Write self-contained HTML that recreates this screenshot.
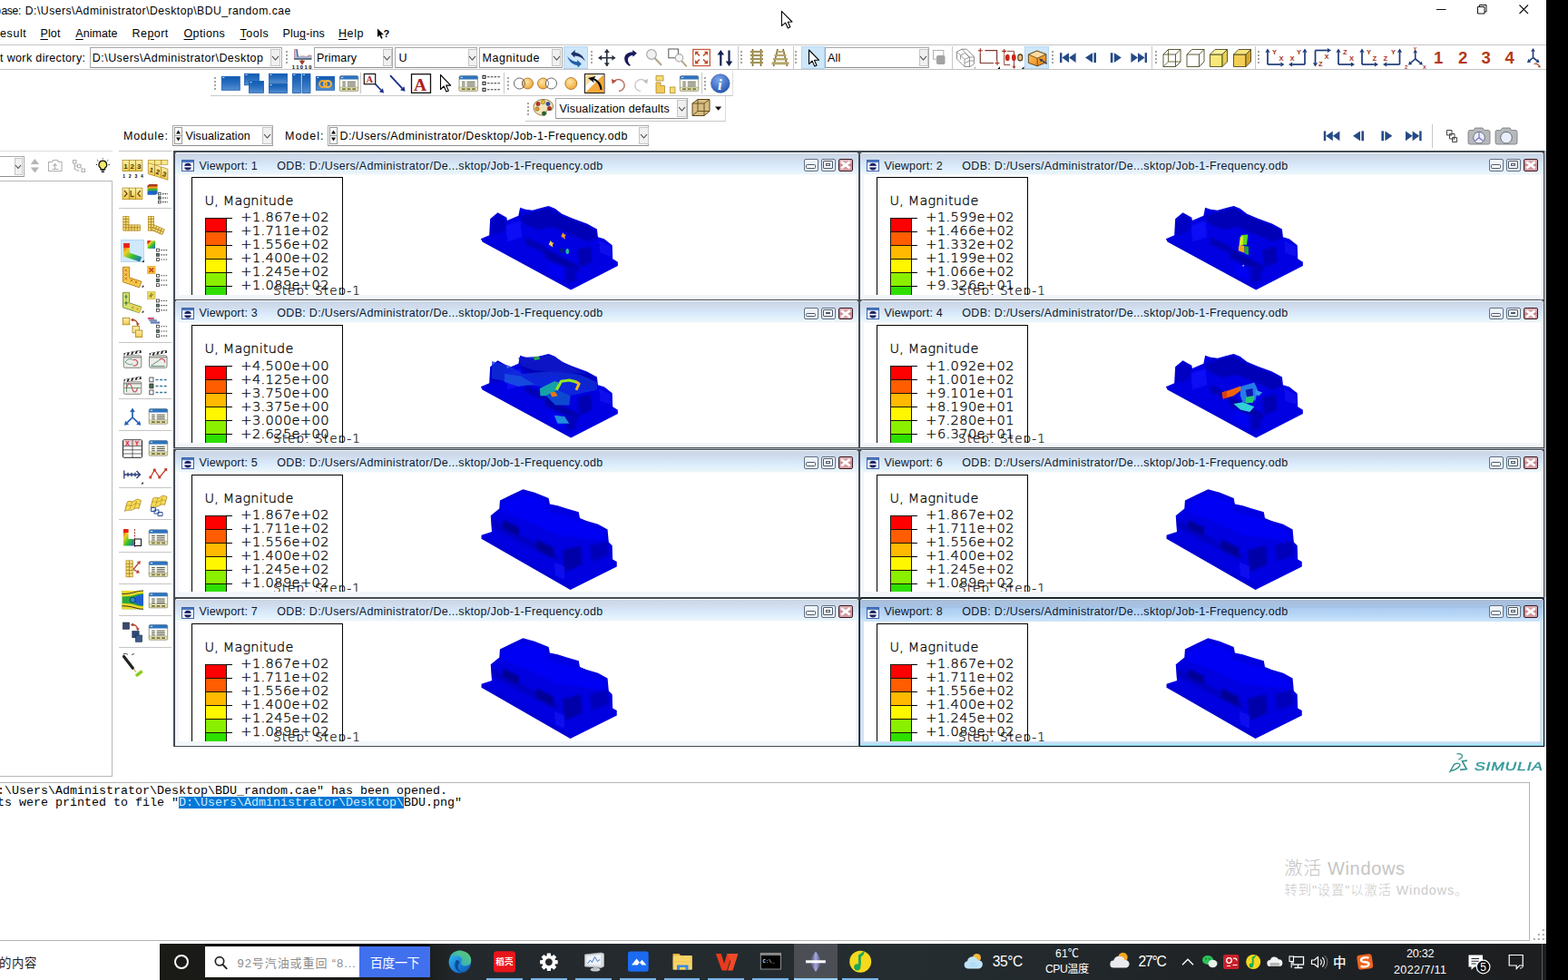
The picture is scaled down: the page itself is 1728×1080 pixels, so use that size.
<!DOCTYPE html>
<html lang="en"><head><meta charset="utf-8"><title>Abaqus/CAE - Model Database: D:\Users\Administrator\Desktop\BDU_random.cae</title>
<style>
html,body{margin:0;padding:0}
body{width:1728px;height:1080px;position:relative;overflow:hidden;background:#fff;font-family:"Liberation Sans","Noto Sans CJK SC",sans-serif;font-size:12.5px;color:#000}
.t{position:absolute;white-space:pre;line-height:20px}
.pb{display:inline-block;width:0;height:0}
.b{position:absolute;box-sizing:border-box;overflow:visible}
.g{position:absolute;left:0;top:0}
.cb{position:absolute;box-sizing:border-box;background:#fff;border:1px solid #a9a9a9;border-bottom-color:#8e8e8e}
.ar{position:absolute;box-sizing:border-box;background:#f0f0f0;border:1px solid #c6c6c6}
.hl{position:absolute;box-sizing:border-box;background:#cde6fa;border:1px solid #b3d6f4}
.sep{position:absolute;width:1px;background:#c8c8c8}
.hline{position:absolute;height:1px;background:#c4c4c4}
.dots{position:absolute;width:2px;background:repeating-linear-gradient(#aaa5a5 0 2px,transparent 2px 4px)}
.vp{position:absolute;box-sizing:border-box;background:#fff;overflow:hidden}
.vt{position:absolute;background:linear-gradient(#cbd6e5,#d0dcec 25%,#d7e8fa 52%,#e2f1fc 76%,#ecf5fa 95%,#fff)}
.vc{position:absolute;overflow:hidden;background:#fff}
.wb{position:absolute;box-sizing:border-box;border:1.200px solid #627082;border-radius:2px;background:linear-gradient(#f1f6fb,#e6eef7)}
</style></head>
<body>
<div class="g" id="titlebar"><span class="t" style="left:-5.70px;top:1.70px;font-size:12.2px;font-family:'Liberation Sans','Noto Sans CJK SC',sans-serif;">b</span><span class="t" style="left:1.40px;top:1.70px;font-size:12.2px;font-family:'Liberation Sans','Noto Sans CJK SC',sans-serif;letter-spacing:-0.350px;">ase:</span><span class="t" style="left:27.80px;top:1.70px;font-size:12.2px;font-family:'Liberation Sans','Noto Sans CJK SC',sans-serif;letter-spacing:0.490px;">D:\Users\Administrator\Desktop\BDU_random.cae</span><svg class="b" style="left:1578px;top:0px;" width="112" height="22" viewBox="1578 0 112 22"><path d="M1583 10.5h10.5" stroke="#111" stroke-width="1" fill="none"/><path d="M1628.5 7.5h7.5v7.5h-7.5zM1630.5 7.5v-2h7.5v7.5h-2" stroke="#111" stroke-width="1" fill="none"/><path d="M1674.5 5.5l9.5 9.5M1684 5.5l-9.5 9.5" stroke="#111" stroke-width="1.1" fill="none"/></svg></div>
<div class="g" id="menubar"><span class="t" style="left:-9.50px;top:26.80px;font-size:12.5px;font-family:'Liberation Sans','Noto Sans CJK SC',sans-serif;letter-spacing:0.548px;text-underline-offset:1.5px;"><u>R</u>esult</span><span class="t" style="left:44.40px;top:26.80px;font-size:12.5px;font-family:'Liberation Sans','Noto Sans CJK SC',sans-serif;letter-spacing:0.178px;text-underline-offset:1.5px;"><u>P</u>lot</span><span class="t" style="left:83.30px;top:26.80px;font-size:12.5px;font-family:'Liberation Sans','Noto Sans CJK SC',sans-serif;letter-spacing:0.066px;text-underline-offset:1.5px;"><u>A</u>nimate</span><span class="t" style="left:145.50px;top:26.80px;font-size:12.5px;font-family:'Liberation Sans','Noto Sans CJK SC',sans-serif;letter-spacing:0.441px;text-underline-offset:1.5px;">Re<u>p</u>ort</span><span class="t" style="left:202.50px;top:26.80px;font-size:12.5px;font-family:'Liberation Sans','Noto Sans CJK SC',sans-serif;letter-spacing:0.362px;text-underline-offset:1.5px;"><u>O</u>ptions</span><span class="t" style="left:264.50px;top:26.80px;font-size:12.5px;font-family:'Liberation Sans','Noto Sans CJK SC',sans-serif;letter-spacing:0.517px;text-underline-offset:1.5px;"><u>T</u>ools</span><span class="t" style="left:311.50px;top:26.80px;font-size:12.5px;font-family:'Liberation Sans','Noto Sans CJK SC',sans-serif;letter-spacing:0.156px;text-underline-offset:1.5px;">Plu<u>g</u>-ins</span><span class="t" style="left:373.00px;top:26.80px;font-size:12.5px;font-family:'Liberation Sans','Noto Sans CJK SC',sans-serif;letter-spacing:0.581px;text-underline-offset:1.5px;"><u>H</u>elp</span><svg class="b" style="left:415px;top:30px;" width="14" height="14" viewBox="415 30 14 14"><path d="M416 31.5v9.5l2.3-2.2 1.8 3.9 1.5-.7-1.8-3.8h3.2z" fill="#000"/></svg><span class="t" style="left:422.50px;top:27.00px;font-size:11px;font-family:'Liberation Sans','Noto Sans CJK SC',sans-serif;font-weight:700;">?</span></div>
<div class="g" id="toolbars"><div class="hline" style="left:0px;top:49px;width:1704px;height:1px;"></div><div class="hline" style="left:0px;top:76px;width:1704px;height:1px;"></div><div class="b" style="left:232px;top:77.5px;width:576px;height:28.5px;border-bottom:1px solid #c9c9c9;border-right:1px solid #dcdcdc;"></div><div class="b" style="left:579px;top:106px;width:220.5px;height:27.5px;border-bottom:1px solid #c9c9c9;border-right:1px solid #dcdcdc;"></div><span class="t" style="left:0.00px;top:53.70px;font-size:12.5px;font-family:'Liberation Sans','Noto Sans CJK SC',sans-serif;letter-spacing:0.360px;">t work directory:</span><div class="cb" style="left:98.5px;top:51.5px;width:212.25px;height:23.5px;"></div><div class="ar" style="left:297.5px;top:53.5px;width:11.25px;height:19.5px;"></div><svg class="b" style="left:298.62px;top:60.75px;" width="9" height="6" viewBox="298.62 60.75 9 6"><path d="M299.62 61.75 L303.12 65.75 L306.62 61.75" fill="none" stroke="#444" stroke-width="1.1"/></svg><span class="t" style="left:101.80px;top:53.70px;font-size:12.5px;font-family:'Liberation Sans','Noto Sans CJK SC',sans-serif;letter-spacing:0.452px;">D:\Users\Administrator\Desktop</span><div class="dots" style="left:314.5px;top:56px;width:2px;height:14px;"></div><div class="cb" style="left:346px;top:51.5px;width:86.5px;height:23.5px;"></div><div class="ar" style="left:421.5px;top:53.5px;width:10px;height:19.5px;"></div><svg class="b" style="left:422px;top:60.75px;" width="9" height="6" viewBox="422 60.75 9 6"><path d="M423 61.75 L426.5 65.75 L430 61.75" fill="none" stroke="#444" stroke-width="1.1"/></svg><span class="t" style="left:349.00px;top:53.70px;font-size:12.5px;font-family:'Liberation Sans','Noto Sans CJK SC',sans-serif;letter-spacing:0.158px;">Primary</span><div class="cb" style="left:434.5px;top:51.5px;width:91.5px;height:23.5px;"></div><div class="ar" style="left:515.75px;top:53.5px;width:10px;height:19.5px;"></div><svg class="b" style="left:516.25px;top:60.75px;" width="9" height="6" viewBox="516.25 60.75 9 6"><path d="M517.25 61.75 L520.75 65.75 L524.25 61.75" fill="none" stroke="#444" stroke-width="1.1"/></svg><span class="t" style="left:439.50px;top:53.70px;font-size:12.5px;font-family:'Liberation Sans','Noto Sans CJK SC',sans-serif;">U</span><div class="cb" style="left:528px;top:51.5px;width:91.5px;height:23.5px;"></div><div class="ar" style="left:608px;top:53.5px;width:10px;height:19.5px;"></div><svg class="b" style="left:608.5px;top:60.75px;" width="9" height="6" viewBox="608.5 60.75 9 6"><path d="M609.5 61.75 L613 65.75 L616.5 61.75" fill="none" stroke="#444" stroke-width="1.1"/></svg><span class="t" style="left:531.50px;top:53.70px;font-size:12.5px;font-family:'Liberation Sans','Noto Sans CJK SC',sans-serif;letter-spacing:0.572px;">Magnitude</span><div class="hl" style="left:620.75px;top:50.5px;width:27px;height:25.5px;"></div><div class="dots" style="left:651px;top:56px;width:2px;height:14px;"></div><div class="dots" style="left:815.5px;top:56px;width:2px;height:14px;"></div><div class="dots" style="left:876px;top:56px;width:2px;height:14px;"></div><div class="dots" style="left:1159px;top:56px;width:2px;height:14px;"></div><div class="dots" style="left:1273px;top:56px;width:2px;height:14px;"></div><div class="dots" style="left:1386px;top:56px;width:2px;height:14px;"></div><div class="sep" style="left:812.5px;top:51px;width:1px;height:25px;"></div><div class="sep" style="left:874px;top:51px;width:1px;height:25px;"></div><div class="sep" style="left:1049px;top:51px;width:1px;height:25px;"></div><div class="sep" style="left:1268.5px;top:51px;width:1px;height:25px;"></div><div class="sep" style="left:1383px;top:51px;width:1px;height:25px;"></div><div class="hl" style="left:882.5px;top:50.5px;width:26px;height:25.5px;"></div><div class="cb" style="left:908.5px;top:51.5px;width:115.5px;height:23.5px;"></div><div class="ar" style="left:1012.5px;top:53.5px;width:10px;height:19.5px;"></div><svg class="b" style="left:1013px;top:60.75px;" width="9" height="6" viewBox="1013 60.75 9 6"><path d="M1014 61.75 L1017.5 65.75 L1021 61.75" fill="none" stroke="#444" stroke-width="1.1"/></svg><span class="t" style="left:912.00px;top:53.70px;font-size:12.5px;font-family:'Liberation Sans','Noto Sans CJK SC',sans-serif;letter-spacing:0.193px;">All</span><div class="hl" style="left:1129.2px;top:50.5px;width:26.5px;height:25.5px;"></div><span class="t" style="left:1580.00px;top:54.20px;font-size:18.5px;font-family:'Liberation Sans','Noto Sans CJK SC',sans-serif;color:#b3391c;font-weight:700;">1</span><span class="t" style="left:1607.00px;top:54.20px;font-size:18.5px;font-family:'Liberation Sans','Noto Sans CJK SC',sans-serif;color:#b3391c;font-weight:700;">2</span><span class="t" style="left:1632.40px;top:54.20px;font-size:18.5px;font-family:'Liberation Sans','Noto Sans CJK SC',sans-serif;color:#b3391c;font-weight:700;">3</span><span class="t" style="left:1658.40px;top:54.20px;font-size:18.5px;font-family:'Liberation Sans','Noto Sans CJK SC',sans-serif;color:#b3391c;font-weight:700;">4</span><div class="dots" style="left:236px;top:85px;width:2px;height:14px;"></div><div class="dots" style="left:559px;top:85px;width:2px;height:14px;"></div><div class="dots" style="left:776px;top:85px;width:2px;height:14px;"></div><div class="sep" style="left:397.4px;top:80px;width:1px;height:23px;"></div><div class="sep" style="left:555px;top:80px;width:1px;height:23px;"></div><div class="sep" style="left:772.5px;top:80px;width:1px;height:23px;"></div><div class="dots" style="left:581px;top:113px;width:2px;height:14px;"></div><div class="cb" style="left:612px;top:107.5px;width:146px;height:23.5px;"></div><div class="ar" style="left:745.75px;top:109.5px;width:10.75px;height:19.5px;"></div><svg class="b" style="left:746.62px;top:116.75px;" width="9" height="6" viewBox="746.62 116.75 9 6"><path d="M747.62 117.75 L751.12 121.75 L754.62 117.75" fill="none" stroke="#444" stroke-width="1.1"/></svg><span class="t" style="left:616.50px;top:109.80px;font-size:12.5px;font-family:'Liberation Sans','Noto Sans CJK SC',sans-serif;letter-spacing:0.193px;">Visualization defaults</span><span class="t" style="left:136.00px;top:139.50px;font-size:12.5px;font-family:'Liberation Sans','Noto Sans CJK SC',sans-serif;letter-spacing:0.734px;">Module:</span><div class="cb" style="left:190px;top:138px;width:111px;height:23px;"></div><div class="ar" style="left:289px;top:140px;width:11px;height:19px;"></div><svg class="b" style="left:290px;top:147px;" width="9" height="6" viewBox="290 147 9 6"><path d="M291 148 L294.5 152 L298 148" fill="none" stroke="#444" stroke-width="1.1"/></svg><span class="t" style="left:204.50px;top:139.50px;font-size:12.5px;font-family:'Liberation Sans','Noto Sans CJK SC',sans-serif;letter-spacing:0.100px;">Visualization</span><svg class="b" style="left:191.8px;top:140px;" width="9" height="19" viewBox="191.8 140 9 19"><rect x="192.3" y="140.5" width="8" height="18" fill="#fdfdfd" stroke="#9a9a9a" stroke-width="1"/><path d="M193.8 147.5 l2.5 -4 l2.5 4z M193.8 151.5 l2.5 4 l2.5 -4z" fill="#111"/><path d="M191.8 149.5h9" stroke="#9a9a9a"/></svg><span class="t" style="left:314.00px;top:139.50px;font-size:12.5px;font-family:'Liberation Sans','Noto Sans CJK SC',sans-serif;letter-spacing:0.991px;">Model:</span><div class="cb" style="left:361px;top:138px;width:354px;height:23px;"></div><div class="ar" style="left:703.5px;top:140px;width:11px;height:19px;"></div><svg class="b" style="left:704.5px;top:147px;" width="9" height="6" viewBox="704.5 147 9 6"><path d="M705.5 148 L709 152 L712.5 148" fill="none" stroke="#444" stroke-width="1.1"/></svg><span class="t" style="left:374.50px;top:139.70px;font-size:12.5px;font-family:'Liberation Sans','Noto Sans CJK SC',sans-serif;letter-spacing:0.419px;">D:/Users/Administrator/Desktop/Job-1-Frequency.odb</span><svg class="b" style="left:362.8px;top:140px;" width="9" height="19" viewBox="362.8 140 9 19"><rect x="363.3" y="140.5" width="8" height="18" fill="#fdfdfd" stroke="#9a9a9a" stroke-width="1"/><path d="M364.8 147.5 l2.5 -4 l2.5 4z M364.8 151.5 l2.5 4 l2.5 -4z" fill="#111"/><path d="M362.8 149.5h9" stroke="#9a9a9a"/></svg><div class="sep" style="left:1578px;top:137px;width:1px;height:26px;"></div></div>
<div class="g" id="toolbar-icons"><svg class="b" style="left:318px;top:49px;" width="1386" height="28.5" viewBox="318 49 1386 28.5"><path d="M324.500 54.500h3v8.500c4-1.500 8-1.500 12 0v-2h3.500v4h-18.500z" fill="#9cc4e8" stroke="#c8788a" stroke-width=".8"/><path d="M324 65h19.500" stroke="#2f4f5f" stroke-width="1.300"/><path d="M327 54.500l1.500 8" stroke="#2b4f8f" stroke-width="1"/><path d="M333 65.500v3.500m-2-1.500l2 3 2-3z" stroke="#9a3c2c" stroke-width="1.300" fill="#9a3c2c"/><text x="321.800" y="76" font-family="Liberation Sans,sans-serif" font-weight="700" font-size="5.800" letter-spacing="1.450" fill="#000">11010</text><path d="M629.100 59.200L633.800 55l-.2 2.800c5.400.7 9.400 4.200 11.100 9.500-3.200-3.800-6.700-5.500-11.300-5.800l-.1 2.100z" fill="#1c3068"/><path d="M640.800 70.400l-4.100 4.200-.1-2.600c-5.600-.5-9.600-4.500-11.400-10 3.300 4 6.800 6 11.100 6.300l-.2-2.300z" fill="#1f5fa8"/><path d="M668.8 54.7v18M659.8 63.7h18" stroke="#2a3040" stroke-width="1.600"/><path d="M668.8 54.1l-3 4h6z" fill="#2a3040"/><path d="M668.8 73.3l-3 -4h6z" fill="#2a3040"/><path d="M659.2 63.7l4 -3v6z" fill="#2a3040"/><path d="M678.4 63.7l-4 -3v6z" fill="#2a3040"/><path d="M701.800 58.400L697.100 55l.2 2.300c-6.300.2-9.300 3.700-9.100 7.700.2 3.500 2.300 6 5.300 7.700l1.500-.7c-2.500-2.500-3.400-5-3-7 .5-2.500 2.500-3.800 5.400-4l.2 1.800z" fill="#1a1a5e"/><path d="M721.500 64l7 7.300" stroke="#b5a78a" stroke-width="2.200" stroke-linecap="round"/><circle cx="718" cy="60" r="5.300" fill="#f1f1f1" stroke="#a9a9a9" stroke-width="1.200"/><rect x="736.800" y="54" width="10.600" height="9.800" fill="none" stroke="#555" stroke-width="1"/><path d="M751 66.800l5.300 6" stroke="#b5a78a" stroke-width="2" stroke-linecap="round"/><circle cx="748.500" cy="63.800" r="4.200" fill="#f4f4f4" stroke="#a9a9a9" stroke-width="1.100"/><rect x="763.800" y="54.500" width="18.500" height="18" fill="#fff" stroke="#c7573a" stroke-width="1.300"/><path d="M771 61.5l-4 -4" stroke="#c0451f" stroke-width="1.600"/><path d="M766 56.7l4.2 0l-4.2 4.2z" fill="#c0451f"/><path d="M775 61.5l4 -4" stroke="#c0451f" stroke-width="1.600"/><path d="M780 56.7l-4.2 0l4.2 4.2z" fill="#c0451f"/><path d="M771 65.5l-4 4" stroke="#c0451f" stroke-width="1.600"/><path d="M766 70.3l4.2 0l-4.2 -4.2z" fill="#c0451f"/><path d="M775 65.5l4 4" stroke="#c0451f" stroke-width="1.600"/><path d="M780 70.3l-4.2 0l4.2 -4.2z" fill="#c0451f"/><path d="M794.300 72.500v-13M803.500 55.500v13" stroke="#14204e" stroke-width="2.200"/><path d="M794.300 55l-3.800 5.500h7.600zM803.500 73l-3.800-5.500h7.600z" fill="#14204e"/><path d="M829.500 54v19M838.500 54v19" stroke="#7d6f35" stroke-width="1.600"/><path d="M826.800 57h14.200" stroke="#a5955a" stroke-width="2.200"/><path d="M826.800 61h14.200" stroke="#a5955a" stroke-width="2.200"/><path d="M826.800 65h14.200" stroke="#a5955a" stroke-width="2.200"/><path d="M826.800 69h14.200" stroke="#a5955a" stroke-width="2.200"/><path d="M857 54l-4.500 19M863 54l4.500 19" stroke="#7d6f35" stroke-width="1.600"/><path d="M855 57h10" stroke="#b5a56a" stroke-width="1.8"/><path d="M853.5 61h13" stroke="#b5a56a" stroke-width="2.15"/><path d="M852 65.2h16" stroke="#b5a56a" stroke-width="2.5"/><path d="M850.5 69.8h19" stroke="#b5a56a" stroke-width="2.85"/><path d="M891.500 55v15.500l3.600-3.400 2.600 5.800 2.300-1-2.600-5.700h5z" fill="#fff" stroke="#000" stroke-width="1.100" stroke-linejoin="round"/><rect x="1028.500" y="55.500" width="11.300" height="9.700" fill="#fff" stroke="#b0b0b0" stroke-width="1"/><rect x="1032" y="61" width="9.500" height="10" rx="1.800" fill="#a3a3a3"/><path d="M1054.500 57l5.500-2.800h5l8.500 8.300v8l-4.500 3h-6l-8.500-8.500z" fill="#fff" stroke="#8f8f8f" stroke-width="1"/><path d="M1054.500 57l8.500 8.500v8M1063 65.500l5.500-2.500h5M1060 54.200l8.500 8.800v10.500M1058.500 61l5-2.500 4.500 4.500M1063 69.500l5.500-2.500h5M1058.500 61v4.500" fill="none" stroke="#8f8f8f" stroke-width=".9"/><path d="M1073 75.500l2.200-2.200v2.200z" fill="#9a9a9a"/><path d="M1085.500 55.700h13.100v11.300M1080.300 58.500v11h14.700" fill="none" stroke="#7a3a35" stroke-width="1.200"/><path d="M1077.800 55.700h5M1080.300 53.200v5M1096.500 69.500h5M1099 67v5" stroke="#a02a20" stroke-width="1.100"/><path d="M1099.300 76l2.700-2.700v2.700z" fill="#111"/><path d="M1104.200 56.400h5M1106.700 53.900v5" stroke="#a02a20" stroke-width="1.100"/><path d="M1110 56.400h7.500v15M1106.700 59.500v12h6.500" fill="none" stroke="#8a4a42" stroke-width="1"/><path d="M1117.500 71v3.500m-1.600-1.800l1.600 2.600 1.600-2.600" fill="none" stroke="#a02a20" stroke-width="1"/><ellipse cx="1110.300" cy="63.400" rx="2.400" ry="3.600" fill="#c8281a"/><ellipse cx="1117.300" cy="63.400" rx="2.400" ry="3.600" fill="#c8281a"/><ellipse cx="1124.300" cy="63.400" rx="2.500" ry="3.500" fill="#e8c080" stroke="#3a2a10" stroke-width="1.100"/><path d="M1125.800 76l2.700-2.700v2.700z" fill="#111"/><defs><linearGradient id="obx" x1="0" y1="0" x2="1" y2="1"><stop offset="0" stop-color="#f8c868"/><stop offset="1" stop-color="#f07c0c"/></linearGradient></defs><path d="M1133.400 60.200l9.300-4.100 10.200 3.700v9l-9.700 4-9.800-3.500z" fill="url(#obx)" stroke="#5a3a10" stroke-width=".9" stroke-linejoin="round"/><path d="M1133.400 60.200l9.300-4.100 10.200 3.700-9.700 4.400z" fill="#fbdca0" stroke="#5a3a10" stroke-width=".8" stroke-linejoin="round"/><path d="M1143.200 64.200v8.600" stroke="#5a3a10" stroke-width=".8"/><path d="M1146.500 65.600l7.300 4.800" stroke="#3c4450" stroke-width="1.700"/><path d="M1145 64.600l4.300.6-2.300 3.200z" fill="#3c4450"/><rect x="1168" y="58.2" width="2.400" height="10.8" fill="#264a86"/><path d="M1178 58.2L1170.4 63.6L1178 69z M1185.6 58.2L1178 63.6L1185.6 69z" fill="#264a86"/><path d="M1204 58.2L1196 63.6L1204 69z" fill="#264a86"/><rect x="1205.4" y="58.2" width="2.600" height="10.8" fill="#264a86"/><rect x="1223.8" y="58.2" width="2.600" height="10.8" fill="#264a86"/><path d="M1227.8 58.2L1235.8 63.6L1227.8 69z" fill="#264a86"/><path d="M1246.4 58.2L1254 63.6L1246.4 69z M1254 58.2L1261.6 63.6L1254 69z" fill="#264a86"/><rect x="1261.6" y="58.2" width="2.400" height="10.8" fill="#264a86"/><path d="M1282 60h13.5v13.5h-13.5z M1282 60l5.5 -5.5h13.5l-5.5 5.5 M1301 54.5v13.5l-5.5 5.5" fill="none" stroke="#4a4a20" stroke-width="0.9" stroke-linejoin="round"/><path d="M1287.5 54.5v13.5h13.5 M1282 73.5l5.5 -5.5" fill="none" stroke="#4a4a20" stroke-width="0.800"/><path d="M1308 60h13.5v13.5h-13.5z M1308 60l5.5 -5.5h13.5l-5.5 5.5 M1327 54.5v13.5l-5.5 5.5" fill="#fff" stroke="#4a4a20" stroke-width="0.9" stroke-linejoin="round"/><path d="M1333.5 60h13.5v13.5h-13.5z" fill="#f8e878" stroke="#4a4a20" stroke-width="0.9" stroke-linejoin="round"/><path d="M1333.5 60l5.5 -5.5h13.5l-5.5 5.5z" fill="#fbf0a0" stroke="#4a4a20" stroke-width="0.9" stroke-linejoin="round"/><path d="M1347 60l5.5 -5.5v13.5l-5.5 5.5z" fill="#e8cf55" stroke="#4a4a20" stroke-width="0.9" stroke-linejoin="round"/><path d="M1359.5 60h13.5v13.5h-13.5z" fill="#f3cf58" stroke="#4a4a20" stroke-width="0.9" stroke-linejoin="round"/><path d="M1359.5 60l5.5 -5.5h13.5l-5.5 5.5z" fill="#f9e27c" stroke="#4a4a20" stroke-width="0.9" stroke-linejoin="round"/><path d="M1373 60l5.5 -5.5v13.5l-5.5 5.5z" fill="#d9a62e" stroke="#4a4a20" stroke-width="0.9" stroke-linejoin="round"/><path d="M1397 71L1411.34 71" stroke="#1c3a78" stroke-width="1.7" fill="none"/><path d="M1415.5 71L1411.34 73.6L1411.34 68.4z" fill="#1c3a78"/><path d="M1397 71L1397 57.66" stroke="#1c3a78" stroke-width="1.7" fill="none"/><path d="M1397 53.5L1399.6 57.66L1394.4 57.66z" fill="#1c3a78"/><text x="1402" y="60" font-family="Liberation Sans,sans-serif" font-weight="700" font-size="7.5" fill="#a8321c">Y</text><text x="1409.5" y="67" font-family="Liberation Sans,sans-serif" font-weight="700" font-size="7.5" fill="#a8321c">X</text><path d="M1438 71L1424.16 71" stroke="#1c3a78" stroke-width="1.7" fill="none"/><path d="M1420 71L1424.16 68.4L1424.16 73.6z" fill="#1c3a78"/><path d="M1438 71L1438 57.66" stroke="#1c3a78" stroke-width="1.7" fill="none"/><path d="M1438 53.5L1440.6 57.66L1435.4 57.66z" fill="#1c3a78"/><text x="1429" y="60" font-family="Liberation Sans,sans-serif" font-weight="700" font-size="7.5" fill="#a8321c">Y</text><text x="1421.5" y="67" font-family="Liberation Sans,sans-serif" font-weight="700" font-size="7.5" fill="#a8321c">X</text><path d="M1449.5 55.5L1462.84 55.5" stroke="#1c3a78" stroke-width="1.7" fill="none"/><path d="M1467 55.5L1462.84 58.1L1462.84 52.9z" fill="#1c3a78"/><path d="M1449.5 55.5L1449.5 69.34" stroke="#1c3a78" stroke-width="1.7" fill="none"/><path d="M1449.5 73.5L1446.9 69.34L1452.1 69.34z" fill="#1c3a78"/><text x="1459.5" y="64.5" font-family="Liberation Sans,sans-serif" font-weight="700" font-size="7.5" fill="#a8321c">X</text><text x="1453" y="73" font-family="Liberation Sans,sans-serif" font-weight="700" font-size="7.5" fill="#a8321c">Z</text><path d="M1475 71L1488.84 71" stroke="#1c3a78" stroke-width="1.7" fill="none"/><path d="M1493 71L1488.84 73.6L1488.84 68.4z" fill="#1c3a78"/><path d="M1475 71L1475 57.66" stroke="#1c3a78" stroke-width="1.7" fill="none"/><path d="M1475 53.5L1477.6 57.66L1472.4 57.66z" fill="#1c3a78"/><text x="1480" y="60" font-family="Liberation Sans,sans-serif" font-weight="700" font-size="7.5" fill="#a8321c">Z</text><text x="1487" y="67" font-family="Liberation Sans,sans-serif" font-weight="700" font-size="7.5" fill="#a8321c">X</text><path d="M1501 71L1514.84 71" stroke="#1c3a78" stroke-width="1.7" fill="none"/><path d="M1519 71L1514.84 73.6L1514.84 68.4z" fill="#1c3a78"/><path d="M1501 71L1501 57.66" stroke="#1c3a78" stroke-width="1.7" fill="none"/><path d="M1501 53.5L1503.6 57.66L1498.4 57.66z" fill="#1c3a78"/><text x="1506" y="60" font-family="Liberation Sans,sans-serif" font-weight="700" font-size="7.5" fill="#a8321c">Y</text><text x="1512.5" y="67" font-family="Liberation Sans,sans-serif" font-weight="700" font-size="7.5" fill="#a8321c">Z</text><path d="M1542.5 71L1528.16 71" stroke="#1c3a78" stroke-width="1.7" fill="none"/><path d="M1524 71L1528.16 68.4L1528.16 73.6z" fill="#1c3a78"/><path d="M1542.5 71L1542.5 57.66" stroke="#1c3a78" stroke-width="1.7" fill="none"/><path d="M1542.5 53.5L1545.1 57.66L1539.9 57.66z" fill="#1c3a78"/><text x="1533" y="60" font-family="Liberation Sans,sans-serif" font-weight="700" font-size="7.5" fill="#a8321c">Y</text><text x="1524.5" y="67" font-family="Liberation Sans,sans-serif" font-weight="700" font-size="7.5" fill="#a8321c">Z</text><path d="M1559.7 65L1559.7 58.18" stroke="#1c3a78" stroke-width="1.6" fill="none"/><path d="M1559.7 54.5L1562 58.18L1557.4 58.18z" fill="#1c3a78"/><path d="M1559.7 65L1554.81 69.13" stroke="#1c3a78" stroke-width="1.6" fill="none"/><path d="M1552 71.5L1553.33 67.37L1556.3 70.88z" fill="#1c3a78"/><path d="M1559.7 65L1565.1 69.23" stroke="#1c3a78" stroke-width="1.6" fill="none"/><path d="M1568 71.5L1563.68 71.04L1566.52 67.42z" fill="#1c3a78"/><text x="1557.5" y="55.5" font-family="Liberation Sans,sans-serif" font-weight="700" font-size="5.5" fill="#a8321c">Y</text><text x="1548" y="75.5" font-family="Liberation Sans,sans-serif" font-weight="700" font-size="5.5" fill="#a8321c">Z</text><text x="1568" y="76" font-family="Liberation Sans,sans-serif" font-weight="700" font-size="5.5" fill="#a8321c">X</text><path d="M1689.5 63.5L1689.5 56.68" stroke="#1c3a78" stroke-width="1.6" fill="none"/><path d="M1689.5 53L1691.8 56.68L1687.2 56.68z" fill="#1c3a78"/><path d="M1689.5 63.5L1685.81 66.62" stroke="#1c3a78" stroke-width="1.6" fill="none"/><path d="M1683 69L1684.32 64.87L1687.29 68.38z" fill="#1c3a78"/><path d="M1689.5 63.5L1693.61 66.73" stroke="#1c3a78" stroke-width="1.6" fill="none"/><path d="M1696.5 69L1692.19 68.53L1695.03 64.92z" fill="#1c3a78"/><path d="M1690.500 70.500c2.500-1 4.500 0 5.500 2" fill="none" stroke="#b0432a" stroke-width="1.300"/><path d="M1697.800 74.500l-3.200-.5 2.400-2.400z" fill="#b0432a"/></svg><svg class="b" style="left:240px;top:79px;" width="570" height="26" viewBox="240 79 570 26"><defs><linearGradient id="bwg" x1="0" y1="0" x2="0" y2="1"><stop offset="0" stop-color="#0f59b0"/><stop offset=".5" stop-color="#2a6fc0"/><stop offset="1" stop-color="#5590d2"/></linearGradient></defs><rect x="244.3" y="84.3" width="20" height="15" fill="url(#bwg)" stroke="#1c5aa8" stroke-width=".8"/><rect x="244.3" y="84.3" width="20" height="2" fill="#1560b8"/><rect x="245.3" y="84.9" width="2" height="1" fill="#cfe4fa"/><rect x="269.5" y="81.3" width="16" height="12.5" fill="url(#bwg)" stroke="#1c5aa8" stroke-width=".8"/><rect x="269.5" y="81.3" width="16" height="2" fill="#1560b8"/><rect x="270.5" y="81.9" width="2" height="1" fill="#cfe4fa"/><rect x="274.5" y="89.5" width="16" height="12.8" fill="url(#bwg)" stroke="#1c5aa8" stroke-width=".8"/><rect x="274.5" y="89.5" width="16" height="2" fill="#1560b8"/><rect x="275.5" y="90.1" width="2" height="1" fill="#cfe4fa"/><rect x="296.5" y="81.3" width="20" height="10" fill="url(#bwg)" stroke="#1c5aa8" stroke-width=".8"/><rect x="296.5" y="81.3" width="20" height="2" fill="#1560b8"/><rect x="297.5" y="81.9" width="2" height="1" fill="#cfe4fa"/><rect x="296.5" y="92.5" width="20" height="10" fill="url(#bwg)" stroke="#1c5aa8" stroke-width=".8"/><rect x="296.5" y="92.5" width="20" height="2" fill="#1560b8"/><rect x="297.5" y="93.1" width="2" height="1" fill="#cfe4fa"/><rect x="322.3" y="81.3" width="9" height="21.2" fill="url(#bwg)" stroke="#1c5aa8" stroke-width=".8"/><rect x="322.3" y="81.3" width="9" height="2" fill="#1560b8"/><rect x="323.3" y="81.9" width="2" height="1" fill="#cfe4fa"/><rect x="333" y="81.3" width="9" height="21.2" fill="url(#bwg)" stroke="#1c5aa8" stroke-width=".8"/><rect x="333" y="81.3" width="9" height="2" fill="#1560b8"/><rect x="334" y="81.9" width="2" height="1" fill="#cfe4fa"/><rect x="348.3" y="84.3" width="20.3" height="15" fill="url(#bwg)" stroke="#1c5aa8" stroke-width=".8"/><rect x="348.3" y="84.3" width="20.3" height="2" fill="#1560b8"/><rect x="349.3" y="84.9" width="2" height="1" fill="#cfe4fa"/><ellipse cx="356" cy="92.500" rx="4" ry="3.600" fill="none" stroke="#f5a623" stroke-width="2"/><ellipse cx="361" cy="92.500" rx="4" ry="3.600" fill="none" stroke="#f7b84a" stroke-width="2"/><rect x="374.3" y="83.6" width="20.500" height="16.500" rx="1.500" fill="#fbfbf2" stroke="#8a8a6a" stroke-width=".8"/><path d="M374.3 87.6h20.500v-2.500a1.500 1.500 0 0 0-1.500-1.500h-17.500a1.500 1.500 0 0 0-1.500 1.500z" fill="#2f73c0"/><rect x="375.8" y="84.8" width="2.500" height="1" fill="#d8e8fa"/><path d="M377.3 90.4h3.500M382.8 90.4h9" stroke="#4a4a3a" stroke-width="1"/><path d="M377.3 92.6h3.500M382.8 92.6h9" stroke="#4a4a3a" stroke-width="1"/><path d="M377.3 94.8h3.500M382.8 94.8h9" stroke="#4a4a3a" stroke-width="1"/><rect x="374.3" y="96.1" width="20.500" height="4" fill="#e6e2b8" stroke="#8a8a6a" stroke-width=".5"/><rect x="377.1" y="97.3" width="3.800" height="1.800" fill="#7a7a3a"/><rect x="382.7" y="97.3" width="3.800" height="1.800" fill="#7a7a3a"/><rect x="388.3" y="97.3" width="3.800" height="1.800" fill="#7a7a3a"/><rect x="401.300" y="81.500" width="12.400" height="11.200" fill="#fff" stroke="#111" stroke-width="1.200"/><text x="403.400" y="91.300" font-family="Liberation Serif,serif" font-weight="700" font-size="10.500" fill="#b02020">A</text><path d="M413.5 92.5L419.91 99.25" stroke="#1a2f8a" stroke-width="1.8" fill="none"/><path d="M423 102.5L417.88 101.18L421.94 97.32z" fill="#1a2f8a"/><path d="M430 83.2L443.22 97.3" stroke="#1a2f8a" stroke-width="1.9" fill="none"/><path d="M446.5 100.8L441.03 99.35L445.41 95.25z" fill="#1a2f8a"/><rect x="453.500" y="81.700" width="21" height="20.600" fill="#fff" stroke="#111" stroke-width="1.300"/><text x="456" y="99.500" font-family="Liberation Serif,serif" font-weight="700" font-size="19.500" fill="#b02020">A</text><path d="M485.500 82.500v16l3.700-3.500 2.700 6 2.400-1-2.700-5.900h5.100z" fill="#fff" stroke="#000" stroke-width="1.100" stroke-linejoin="round"/><rect x="506" y="83.6" width="20.500" height="16.500" rx="1.500" fill="#fbfbf2" stroke="#8a8a6a" stroke-width=".8"/><path d="M506 87.6h20.500v-2.500a1.500 1.500 0 0 0-1.500-1.500h-17.500a1.500 1.500 0 0 0-1.500 1.500z" fill="#2f73c0"/><rect x="507.5" y="84.8" width="2.500" height="1" fill="#d8e8fa"/><path d="M509 90.4h3.500M514.5 90.4h9" stroke="#4a4a3a" stroke-width="1"/><path d="M509 92.6h3.500M514.5 92.6h9" stroke="#4a4a3a" stroke-width="1"/><path d="M509 94.8h3.500M514.5 94.8h9" stroke="#4a4a3a" stroke-width="1"/><rect x="506" y="96.1" width="20.500" height="4" fill="#e6e2b8" stroke="#8a8a6a" stroke-width=".5"/><rect x="508.8" y="97.3" width="3.800" height="1.800" fill="#7a7a3a"/><rect x="514.4" y="97.3" width="3.800" height="1.800" fill="#7a7a3a"/><rect x="520" y="97.3" width="3.800" height="1.800" fill="#7a7a3a"/><rect x="532" y="83.3" width="3" height="3" fill="#fff" stroke="#111" stroke-width="1"/><path d="M537 84.8h15" stroke="#333" stroke-width="1.100" stroke-dasharray="2.500 1.300"/><rect x="532" y="90.3" width="3" height="3" fill="#fff" stroke="#111" stroke-width="1"/><path d="M537 91.8h15" stroke="#333" stroke-width="1.100" stroke-dasharray="2.500 1.300"/><rect x="532" y="97.3" width="3" height="3" fill="#fff" stroke="#111" stroke-width="1"/><path d="M537 98.8h15" stroke="#333" stroke-width="1.100" stroke-dasharray="2.500 1.300"/><defs><radialGradient id="og" cx=".4" cy=".35" r=".7"><stop offset="0" stop-color="#fde6a8"/><stop offset="1" stop-color="#f2a531"/></radialGradient></defs><circle cx="572.500" cy="92" r="6" fill="#fff" stroke="#555" stroke-width=".9"/><circle cx="581.5" cy="92" r="6" fill="url(#og)" stroke="#a0641a" stroke-width=".8"/><path d="M577 88a6 6 0 0 1 0 8a6 6 0 0 1 0-8z" fill="#f5c06a" stroke="#555" stroke-width=".7"/><circle cx="598.5" cy="92" r="6" fill="url(#og)" stroke="#a0641a" stroke-width=".8"/><circle cx="607.500" cy="92" r="6" fill="#fff" fill-opacity=".85" stroke="#555" stroke-width=".9"/><path d="M603 88a6 6 0 0 1 0 8a6 6 0 0 1 0-8z" fill="#fff" stroke="#555" stroke-width=".7"/><circle cx="629.3" cy="92" r="6.5" fill="url(#og)" stroke="#a0641a" stroke-width=".8"/><rect x="644.500" y="81.500" width="21.500" height="21" fill="#fff" stroke="#222" stroke-width="1.100"/><path d="M645 102l20.500-20.200v20.200z" fill="#f5a83a"/><path d="M645 82h13l-13 13z" fill="#fbd9a0"/><path d="M661.500 99c-1-6-4-9.500-8-11l1.500 3.500-7-5.500 8.500-2-1.500 2.600c5 2 8.500 6.400 8.500 12.400z" fill="#111"/><path d="M676.500 90a6.500 6.500 0 1 1 5.500 10.500" fill="none" stroke="#b86a5a" stroke-width="1.300"/><path d="M673.800 87l1 5.500 4.500-3.300z" fill="#b0503c"/><path d="M711.500 90a6.500 6.500 0 1 0-5.500 10.500" fill="none" stroke="#c9c9c9" stroke-width="1.300"/><path d="M714.200 87l-1 5.500-4.500-3.300z" fill="#c0c0c0"/><path d="M723 83.500h8v5.500h-8z" fill="#f7dc7a" stroke="#b08a2a" stroke-width=".8"/><path d="M723 91h5v3.500h4.500v8h-9.500z" fill="#f3c95a" stroke="#b08a2a" stroke-width=".8"/><rect x="738.500" y="96" width="5.500" height="6.500" fill="#f7dc7a" stroke="#b08a2a" stroke-width=".8"/><rect x="749.3" y="83.6" width="20.500" height="16.500" rx="1.500" fill="#fbfbf2" stroke="#8a8a6a" stroke-width=".8"/><path d="M749.3 87.6h20.500v-2.500a1.500 1.500 0 0 0-1.500-1.500h-17.500a1.500 1.500 0 0 0-1.500 1.500z" fill="#2f73c0"/><rect x="750.8" y="84.8" width="2.500" height="1" fill="#d8e8fa"/><path d="M752.3 90.4h3.500M757.8 90.4h9" stroke="#4a4a3a" stroke-width="1"/><path d="M752.3 92.6h3.500M757.8 92.6h9" stroke="#4a4a3a" stroke-width="1"/><path d="M752.3 94.8h3.500M757.8 94.8h9" stroke="#4a4a3a" stroke-width="1"/><rect x="749.3" y="96.1" width="20.500" height="4" fill="#e6e2b8" stroke="#8a8a6a" stroke-width=".5"/><rect x="752.1" y="97.3" width="3.800" height="1.800" fill="#7a7a3a"/><rect x="757.7" y="97.3" width="3.800" height="1.800" fill="#7a7a3a"/><rect x="763.3" y="97.3" width="3.800" height="1.800" fill="#7a7a3a"/><defs><radialGradient id="ig" cx=".4" cy=".3" r=".8"><stop offset="0" stop-color="#7aa6e8"/><stop offset="1" stop-color="#1f4fae"/></radialGradient></defs><circle cx="793.800" cy="92" r="10.300" fill="url(#ig)" stroke="#2a4f9a" stroke-width=".6"/><text x="791" y="98.500" font-family="Liberation Serif,serif" font-style="italic" font-weight="700" font-size="17" fill="#fff">i</text></svg><svg class="b" style="left:584px;top:107px;" width="214" height="24" viewBox="584 107 214 24"><path d="M588 118c0-5 5-8.500 11-8.500 6.500 0 10.500 3.500 10.500 8 0 3-2 4.500-4.500 4-2-.4-3.500.5-3 2.500.5 2.500-2 3.500-5.500 3-5-.7-8.500-4-8.500-9z" fill="#f3e3b8" stroke="#8a6a3a" stroke-width=".9"/><circle cx="593" cy="114.5" r="2.200" fill="#d02a1a" stroke="#333" stroke-width=".4"/><circle cx="598.5" cy="112.5" r="2.200" fill="#f0c020" stroke="#333" stroke-width=".4"/><circle cx="604" cy="114.5" r="2.200" fill="#2a4ab8" stroke="#333" stroke-width=".4"/><circle cx="605.5" cy="119.5" r="2.200" fill="#b02a2a" stroke="#333" stroke-width=".4"/><circle cx="599.5" cy="125" r="2.200" fill="#1a6a2a" stroke="#333" stroke-width=".4"/><circle cx="592" cy="120" r="2.200" fill="#e8a020" stroke="#333" stroke-width=".4"/><path d="M763 114l6-4.500h13v13l-6 5h-13z" fill="#d9bc82" stroke="#5a4a1a" stroke-width="1"/><path d="M763 114h13v13.500M776 114l6-4.500M769 109.500v13l-6 5M769 122.500h13" fill="none" stroke="#5a4a1a" stroke-width=".9"/><path d="M788 117.500h7.200l-3.600 4.300z" fill="#111"/></svg><svg class="b" style="left:1456px;top:138px;" width="220" height="24" viewBox="1456 138 220 24"><rect x="1458.8" y="144.4" width="2.400" height="10.8" fill="#264a86"/><path d="M1468.8 144.4L1461.2 149.8L1468.8 155.2z M1476.4 144.4L1468.8 149.8L1476.4 155.2z" fill="#264a86"/><path d="M1499 144.4L1491 149.8L1499 155.2z" fill="#264a86"/><rect x="1500.4" y="144.4" width="2.600" height="10.8" fill="#264a86"/><rect x="1522.4" y="144.4" width="2.600" height="10.8" fill="#264a86"/><path d="M1526.4 144.4L1534.4 149.8L1526.4 155.2z" fill="#264a86"/><path d="M1549 144.4L1556.6 149.8L1549 155.2z M1556.6 144.4L1564.2 149.8L1556.6 155.2z" fill="#264a86"/><rect x="1564.2" y="144.4" width="2.400" height="10.8" fill="#264a86"/><path d="M1594.500 143.500h5.500v5.500h-5.500zM1597.500 147.500h5.500v5.500h-5.500zM1600.500 151.500h5v5h-5z" fill="#fff" stroke="#444" stroke-width="1"/><path d="M1620 143.5h4l1.500-2.500h8.500l1.500 2.500h4.500a2 2 0 0 1 2 2v11.500a2 2 0 0 1-2 2h-20a2 2 0 0 1-2-2v-11.500a2 2 0 0 1 2-2z" fill="#b5b8bc" stroke="#777" stroke-width=".8"/><circle cx="1630" cy="151.7" r="6.300" fill="#e8eefb" stroke="#6a6f78" stroke-width="1"/><path d="M1630 151.7v-5.500M1630 151.7l-4.500 3.500M1630 151.7l4.500 3.500" stroke="#7a66c8" stroke-width="1.100"/><path d="M1650 143.5h4l1.500-2.500h8.500l1.500 2.500h4.500a2 2 0 0 1 2 2v11.500a2 2 0 0 1-2 2h-20a2 2 0 0 1-2-2v-11.500a2 2 0 0 1 2-2z" fill="#b5b8bc" stroke="#777" stroke-width=".8"/><circle cx="1660" cy="151.7" r="6.300" fill="#e8eefb" stroke="#6a6f78" stroke-width="1"/></svg></div>
<div class="g" id="leftpanel"><div class="hline" style="left:0px;top:165.5px;width:123.5px;height:1px;background:#dedede;"></div><div class="cb" style="left:-4px;top:172px;width:30.5px;height:22.5px;"></div><div class="ar" style="left:15.6px;top:174px;width:9.5px;height:18.5px;"></div><svg class="b" style="left:16.3px;top:180.75px;" width="8" height="5.5" viewBox="16.3 180.75 8 5.5"><path d="M17.3 181.75 L20.3 185.25 L23.3 181.75" fill="none" stroke="#444" stroke-width="1.1"/></svg><svg class="b" style="left:32px;top:174px;" width="92" height="18" viewBox="32 174 92 18"><path d="M33.8 181l4.6-6 4.6 6zM33.8 184.6l4.6 6 4.6-6z" fill="#b5b5b5"/><path d="M53.5 178.5h4l1-2h5l1 2h3.5v10h-14.5z" fill="none" stroke="#b0b0b0" stroke-width="1.1"/><path d="M57.5 186.5h7M60.5 186.5v-5.5M58.3 183l2.2-2.4 2.2 2.4" fill="none" stroke="#b0b0b0" stroke-width="1.1"/><path d="M80.5 176.5h3.5v3.5h-3.5zM85.5 181.3h3.5v3.5h-3.5zM90 186h3.500v3.500h-3.5zM82.200 180v6.5l5 2M82.200 183h3" fill="none" stroke="#b0b0b0" stroke-width="1.1"/><path d="M113.300 177.200a4.300 4.300 0 0 1 2.400 7.900v1.500h-4.800v-1.500a4.300 4.300 0 0 1 2.400 -7.900z" fill="#f6e96b" stroke="#111" stroke-width="1.2"/><path d="M111.400 187.800h3.800M111.800 189.400h3" stroke="#111" stroke-width="1.100"/><path d="M113.300 175.300v-.9M108.300 177.200l-1-.8M118.300 177.200l1-.8M107 181.500h-1.200M119.600 181.500h1.200" stroke="#111" stroke-width="1"/></svg><div class="b" style="left:-4px;top:199px;width:128.2px;height:656.5px;border:1px solid #b9b9b9;background:#fff;"></div></div>
<div class="g" id="toolbox"><div class="b" style="left:131px;top:166px;width:58px;height:1px;background:#c6c6c6;"></div><div class="b" style="left:131px;top:229.3px;width:58px;height:1px;background:#c6c6c6;"></div><div class="b" style="left:131px;top:376.5px;width:58px;height:1px;background:#c6c6c6;"></div><div class="b" style="left:131px;top:439.3px;width:58px;height:1px;background:#c6c6c6;"></div><div class="b" style="left:131px;top:474.3px;width:58px;height:1px;background:#c6c6c6;"></div><div class="b" style="left:131px;top:537.4px;width:58px;height:1px;background:#c6c6c6;"></div><div class="b" style="left:131px;top:572.3px;width:58px;height:1px;background:#c6c6c6;"></div><div class="b" style="left:131px;top:607.5px;width:58px;height:1px;background:#c6c6c6;"></div><div class="b" style="left:131px;top:642.5px;width:58px;height:1px;background:#c6c6c6;"></div><div class="b" style="left:131px;top:677.5px;width:58px;height:1px;background:#c6c6c6;"></div><div class="b" style="left:131px;top:712.5px;width:58px;height:1px;background:#c6c6c6;"></div><div class="b" style="left:133px;top:264.3px;width:25.7px;height:24.6px;background:#cfe8fb;border:1px solid #b5d9f5;"></div><svg class="b" style="left:131px;top:170px;" width="58" height="270" viewBox="131 170 58 270"><defs><linearGradient id="yg" x1="0" y1="0" x2="0" y2="1"><stop offset="0" stop-color="#fdf0a8"/><stop offset="1" stop-color="#f3c94a"/></linearGradient><linearGradient id="rb" x1="0" y1="0" x2="1" y2="1"><stop offset="0" stop-color="#e8201a"/><stop offset=".3" stop-color="#f0d020"/><stop offset=".6" stop-color="#30c030"/><stop offset="1" stop-color="#2060e0"/></linearGradient><linearGradient id="rbv" x1="0" y1="0" x2="0" y2="1"><stop offset="0" stop-color="#e8201a"/><stop offset=".35" stop-color="#f0d020"/><stop offset=".7" stop-color="#30c030"/><stop offset="1" stop-color="#2060e0"/></linearGradient></defs><rect x="135" y="176.400" width="7.300" height="12.200" fill="url(#yg)" stroke="#a8821a" stroke-width=".7"/><text x="136.3" y="186" font-family="Liberation Sans,sans-serif" font-weight="700" font-size="8" fill="#4a3a10" >1</text><rect x="142.3" y="176.400" width="7.300" height="12.200" fill="url(#yg)" stroke="#a8821a" stroke-width=".7"/><text x="143.6" y="186" font-family="Liberation Sans,sans-serif" font-weight="700" font-size="8" fill="#4a3a10" >2</text><rect x="149.6" y="176.400" width="7.300" height="12.200" fill="url(#yg)" stroke="#a8821a" stroke-width=".7"/><text x="150.9" y="186" font-family="Liberation Sans,sans-serif" font-weight="700" font-size="8" fill="#4a3a10" >3</text><text x="135.3" y="196.2" font-family="Liberation Sans,sans-serif" font-weight="700" font-size="5" fill="#000" letter-spacing="1.2">1 2 3 4</text><rect x="163.5" y="176.300" width="7" height="5" fill="#fbe88a" stroke="#a8821a" stroke-width=".6"/><path d="M163.3 179.5l7.200 2.400v12l-7.200-2.400z" fill="url(#yg)" stroke="#a8821a" stroke-width=".7"/><text x="164.5" y="189.6" font-family="Liberation Sans,sans-serif" font-weight="700" font-size="7.5" fill="#4a3a10" transform="rotate(14 166 188)">1</text><rect x="170.7" y="176.300" width="7" height="5" fill="#fbe88a" stroke="#a8821a" stroke-width=".6"/><path d="M170.5 181.7l7.200 2.400v12l-7.200-2.400z" fill="url(#yg)" stroke="#a8821a" stroke-width=".7"/><text x="171.7" y="192" font-family="Liberation Sans,sans-serif" font-weight="700" font-size="7.5" fill="#4a3a10" transform="rotate(14 173.2 190.4)">2</text><rect x="177.9" y="176.300" width="7" height="5" fill="#fbe88a" stroke="#a8821a" stroke-width=".6"/><path d="M177.7 183.9l7.200 2.400v12l-7.200-2.400z" fill="url(#yg)" stroke="#a8821a" stroke-width=".7"/><text x="178.9" y="194.4" font-family="Liberation Sans,sans-serif" font-weight="700" font-size="7.5" fill="#4a3a10" transform="rotate(14 180.4 192.8)">3</text><rect x="135" y="207.100" width="7.300" height="12.600" fill="url(#yg)" stroke="#a8821a" stroke-width=".7"/><rect x="142.3" y="207.100" width="7.300" height="12.600" fill="url(#yg)" stroke="#a8821a" stroke-width=".7"/><rect x="149.6" y="207.100" width="7.300" height="12.600" fill="url(#yg)" stroke="#a8821a" stroke-width=".7"/><path d="M137 210l3 3.400-3 3.400M144.200 210v6.500h3.500M154.800 210l-3 3.400 3 3.400" fill="none" stroke="#6a4a10" stroke-width="1.300"/><path d="M162.500 204.5l2-1.500h9v3l-2 1.500h-9z" fill="#a83a1a"/><path d="M162.500 206.9l2-1.500h9v3l-2 1.500h-9z" fill="#e8a020"/><path d="M162.500 209.3l2-1.500h9v3l-2 1.500h-9z" fill="#38b038"/><path d="M162.500 211.7l2-1.500h9v3l-2 1.500h-9z" fill="#2060c8"/><rect x="174.5" y="212.3" width="2.6" height="2.6" fill="#fff" stroke="#333" stroke-width=".8"/><path d="M178.9 213.6h6.1" stroke="#444" stroke-width="1.100" stroke-dasharray="1.600 1.100"/><rect x="174.5" y="216.8" width="2.6" height="2.6" fill="#5a8a6a" stroke="#333" stroke-width=".8"/><path d="M178.9 218.1h6.1" stroke="#444" stroke-width="1.100" stroke-dasharray="1.600 1.100"/><rect x="174.5" y="221.3" width="2.6" height="2.6" fill="#fff" stroke="#333" stroke-width=".8"/><path d="M178.9 222.6h6.1" stroke="#444" stroke-width="1.100" stroke-dasharray="1.600 1.100"/><rect x="135.8" y="238.6" width="3.1" height="3.1" fill="url(#yg)" stroke="#a8821a" stroke-width=".7"/><rect x="135.8" y="241.7" width="3.1" height="3.1" fill="url(#yg)" stroke="#a8821a" stroke-width=".7"/><rect x="135.8" y="244.8" width="3.1" height="3.1" fill="url(#yg)" stroke="#a8821a" stroke-width=".7"/><rect x="135.8" y="247.9" width="3.1" height="3.1" fill="url(#yg)" stroke="#a8821a" stroke-width=".7"/><rect x="135.8" y="251" width="3.1" height="3.1" fill="url(#yg)" stroke="#a8821a" stroke-width=".7"/><rect x="138.9" y="238.6" width="3.1" height="3.1" fill="url(#yg)" stroke="#a8821a" stroke-width=".7"/><rect x="138.9" y="241.7" width="3.1" height="3.1" fill="url(#yg)" stroke="#a8821a" stroke-width=".7"/><rect x="138.9" y="244.8" width="3.1" height="3.1" fill="url(#yg)" stroke="#a8821a" stroke-width=".7"/><rect x="138.9" y="247.9" width="3.1" height="3.1" fill="url(#yg)" stroke="#a8821a" stroke-width=".7"/><rect x="138.9" y="251" width="3.1" height="3.1" fill="url(#yg)" stroke="#a8821a" stroke-width=".7"/><rect x="142" y="247.9" width="3.1" height="3.1" fill="url(#yg)" stroke="#a8821a" stroke-width=".7"/><rect x="142" y="251" width="3.1" height="3.1" fill="url(#yg)" stroke="#a8821a" stroke-width=".7"/><rect x="145.1" y="247.9" width="3.1" height="3.1" fill="url(#yg)" stroke="#a8821a" stroke-width=".7"/><rect x="145.1" y="251" width="3.1" height="3.1" fill="url(#yg)" stroke="#a8821a" stroke-width=".7"/><rect x="148.2" y="247.9" width="3.1" height="3.1" fill="url(#yg)" stroke="#a8821a" stroke-width=".7"/><rect x="148.2" y="251" width="3.1" height="3.1" fill="url(#yg)" stroke="#a8821a" stroke-width=".7"/><rect x="151.3" y="247.9" width="3.1" height="3.1" fill="url(#yg)" stroke="#a8821a" stroke-width=".7"/><rect x="151.3" y="251" width="3.1" height="3.1" fill="url(#yg)" stroke="#a8821a" stroke-width=".7"/><rect x="163.3" y="238.6" width="3.100" height="3.100" fill="url(#yg)" stroke="#a8821a" stroke-width=".7"/><rect x="163.3" y="241.7" width="3.100" height="3.100" fill="url(#yg)" stroke="#a8821a" stroke-width=".7"/><rect x="163.3" y="244.8" width="3.100" height="3.100" fill="url(#yg)" stroke="#a8821a" stroke-width=".7"/><rect x="163.3" y="247.9" width="3.100" height="3.100" fill="url(#yg)" stroke="#a8821a" stroke-width=".7"/><rect x="163.3" y="251" width="3.100" height="3.100" fill="url(#yg)" stroke="#a8821a" stroke-width=".7"/><rect x="166.4" y="238.6" width="3.100" height="3.100" fill="url(#yg)" stroke="#a8821a" stroke-width=".7"/><rect x="166.4" y="241.7" width="3.100" height="3.100" fill="url(#yg)" stroke="#a8821a" stroke-width=".7"/><rect x="166.4" y="244.8" width="3.100" height="3.100" fill="url(#yg)" stroke="#a8821a" stroke-width=".7"/><rect x="166.4" y="247.9" width="3.100" height="3.100" fill="url(#yg)" stroke="#a8821a" stroke-width=".7"/><rect x="166.4" y="251" width="3.100" height="3.100" fill="url(#yg)" stroke="#a8821a" stroke-width=".7"/><g transform="rotate(24 169.500 249)"><rect x="169.5" y="247.8" width="3.100" height="3.100" fill="url(#yg)" stroke="#a8821a" stroke-width=".7"/><rect x="169.5" y="250.9" width="3.100" height="3.100" fill="url(#yg)" stroke="#a8821a" stroke-width=".7"/><rect x="172.6" y="247.8" width="3.100" height="3.100" fill="url(#yg)" stroke="#a8821a" stroke-width=".7"/><rect x="172.6" y="250.9" width="3.100" height="3.100" fill="url(#yg)" stroke="#a8821a" stroke-width=".7"/><rect x="175.7" y="247.8" width="3.100" height="3.100" fill="url(#yg)" stroke="#a8821a" stroke-width=".7"/><rect x="175.7" y="250.9" width="3.100" height="3.100" fill="url(#yg)" stroke="#a8821a" stroke-width=".7"/><rect x="178.8" y="247.8" width="3.100" height="3.100" fill="url(#yg)" stroke="#a8821a" stroke-width=".7"/><rect x="178.8" y="250.9" width="3.100" height="3.100" fill="url(#yg)" stroke="#a8821a" stroke-width=".7"/></g><path d="M136.300 268h6.500v10.500l13.500 4.800-2.300 5.200-17.700-6z" fill="url(#rb)" stroke="none"/><path d="M136.300 268h6.500v5h-6.500z" fill="#e8201a"/><path d="M156.300 289l2.500-2.500v2.500z" fill="#111"/><rect x="162.500" y="265.300" width="8.600" height="8.600" fill="url(#rb)"/><path d="M162.500 265.300h4l-4 4z" fill="#e8201a"/><rect x="172.5" y="274.2" width="2.9" height="2.9" fill="#fff" stroke="#333" stroke-width=".8"/><path d="M177.2 275.65h7.3" stroke="#555" stroke-width="1.100" stroke-dasharray="1.600 1.100"/><rect x="172.5" y="279.4" width="2.9" height="2.9" fill="#5a8a6a" stroke="#333" stroke-width=".8"/><path d="M177.2 280.85h7.3" stroke="#555" stroke-width="1.100" stroke-dasharray="1.600 1.100"/><rect x="172.5" y="284.6" width="2.9" height="2.9" fill="#fff" stroke="#333" stroke-width=".8"/><path d="M177.2 286.05h7.3" stroke="#555" stroke-width="1.100" stroke-dasharray="1.600 1.100"/><path d="M135.5 294.3h7v11.500l13.500 4.500-2.500 6.500-18-6z" fill="#f7c94a" stroke="#b07a1a" stroke-width="0.9" stroke-linejoin="round"/><path d="M137.200 296.500l3 3m0-3l-3 3M137.200 301l3 3m0-3l-3 3M137.200 305.500l3 3m0-3l-3 3M143.500 307.500l3 3m0-3l-3 3M148.500 309.500l3 3m0-3l-3 3" stroke="#c86a1a" stroke-width=".9"/><path d="M155.800 316.500l2.500-2.500v2.500z" fill="#111"/><rect x="162.500" y="293.300" width="8.600" height="8.500" fill="#f7c040" stroke="#d8a030" stroke-width=".5"/><path d="M164.500 295.300l4.600 4.600m0-4.600l-4.600 4.600" stroke="#c8501a" stroke-width="1.700"/><rect x="172.5" y="302.3" width="2.9" height="2.9" fill="#fff" stroke="#333" stroke-width=".8"/><path d="M177.2 303.75h7.3" stroke="#555" stroke-width="1.100" stroke-dasharray="1.600 1.100"/><rect x="172.5" y="307.5" width="2.9" height="2.9" fill="#5a8a6a" stroke="#333" stroke-width=".8"/><path d="M177.2 308.95h7.3" stroke="#555" stroke-width="1.100" stroke-dasharray="1.600 1.100"/><rect x="172.5" y="312.7" width="2.9" height="2.9" fill="#fff" stroke="#333" stroke-width=".8"/><path d="M177.2 314.15h7.3" stroke="#555" stroke-width="1.100" stroke-dasharray="1.600 1.100"/><path d="M135.5 322.3h7v11.500l13.500 4.500-2.500 6.500-18-6z" fill="#d8e070" stroke="#6a8a2a" stroke-width="0.9" stroke-linejoin="round"/><path d="M136.500 333.800h5.500l0 0" stroke="#6a8a2a" stroke-width=".6"/><path d="M139 324.500v5m-1.500-2.500h3M139 331.500v5m-1.500-2.500h3M146 337l1 3.500m-2-1l3-1.500M151 339l1 3.500m-2-1l3-1.500" stroke="#2a6a3a" stroke-width=".9"/><path d="M143 334.500l13 4.500-2.300 6-6-2z" fill="#f3d050" opacity=".7"/><path d="M155.800 344.500l2.500-2.500v2.500z" fill="#111"/><rect x="162.500" y="321.300" width="8.600" height="8.500" fill="#e8d860" stroke="#c8b040" stroke-width=".5"/><path d="M166.500 323v5m-2.500-1.500l5-2" stroke="#8a7a2a" stroke-width="1.100"/><rect x="172.5" y="330" width="2.9" height="2.9" fill="#fff" stroke="#333" stroke-width=".8"/><path d="M177.2 331.45h7.3" stroke="#555" stroke-width="1.100" stroke-dasharray="1.600 1.100"/><rect x="172.5" y="335.2" width="2.9" height="2.9" fill="#5a8a6a" stroke="#333" stroke-width=".8"/><path d="M177.2 336.65h7.3" stroke="#555" stroke-width="1.100" stroke-dasharray="1.600 1.100"/><rect x="172.5" y="340.4" width="2.9" height="2.9" fill="#fff" stroke="#333" stroke-width=".8"/><path d="M177.2 341.85h7.3" stroke="#555" stroke-width="1.100" stroke-dasharray="1.600 1.100"/><rect x="135.300" y="350.300" width="7.500" height="7.500" fill="url(#yg)" stroke="#a8821a" stroke-width=".8"/><rect x="146" y="359.300" width="7.500" height="7.500" fill="#fbe8a0" stroke="#a8821a" stroke-width=".8"/><rect x="149.300" y="364" width="7.500" height="7.500" fill="url(#yg)" stroke="#a8821a" stroke-width=".8"/><path d="M145.500 352.500c3.500-.5 6 2 6.300 5" fill="none" stroke="#b0432a" stroke-width="1.400"/><path d="M143.800 352.600l3.200-2v3.800zM151.900 359.500l-2-3 3.800-.3z" fill="#b0432a"/><path d="M162.8 349.8h7v2.200h-7z" fill="#c85a7a"/><path d="M164.3 352.1h8.6v2.200h-8.6z" fill="#7a8ab8"/><path d="M165.8 354.4h10.2v2.200h-10.2z" fill="#5a7ab0"/><rect x="172.5" y="358.3" width="2.9" height="2.9" fill="#fff" stroke="#333" stroke-width=".8"/><path d="M177.2 359.75h7.3" stroke="#555" stroke-width="1.100" stroke-dasharray="1.600 1.100"/><rect x="172.5" y="363.5" width="2.9" height="2.9" fill="#5a8a6a" stroke="#333" stroke-width=".8"/><path d="M177.2 364.95h7.3" stroke="#555" stroke-width="1.100" stroke-dasharray="1.600 1.100"/><rect x="172.5" y="368.7" width="2.9" height="2.9" fill="#fff" stroke="#333" stroke-width=".8"/><path d="M177.2 370.15h7.3" stroke="#555" stroke-width="1.100" stroke-dasharray="1.600 1.100"/><rect x="136.3" y="391.8" width="19.500" height="13.500" rx="1.500" fill="#eceee6" stroke="#777" stroke-width=".9"/><path d="M136.3 389.3l19-3.500.6 3-19 3.500z" fill="#222"/><path d="M138.1 389.2l2.500-.45-1.200 3.200-2.500.45z" fill="#fff"/><path d="M142.7 388.35l2.500-.45-1.200 3.200-2.500.45z" fill="#fff"/><path d="M147.3 387.5l2.500-.45-1.200 3.200-2.500.45z" fill="#fff"/><path d="M151.9 386.65l2.500-.45-1.200 3.200-2.500.45z" fill="#fff"/><path d="M136.3 393.8h19.500" stroke="#555" stroke-width=".8"/><path d="M138 399c3-4 6-4 8-2.500M138 399c3 3 6 3 8 2" fill="none" stroke="#4a8a7a" stroke-width=".9"/><path d="M146.500 397a3.300 3.300 0 1 1 0 5.500" fill="none" stroke="#c8506a" stroke-width="1.100"/><rect x="164.5" y="391.8" width="19.500" height="13.500" rx="1.500" fill="#eceee6" stroke="#777" stroke-width=".9"/><path d="M164.5 389.3l19-3.500.6 3-19 3.500z" fill="#222"/><path d="M166.3 389.2l2.500-.45-1.200 3.200-2.500.45z" fill="#fff"/><path d="M170.9 388.35l2.500-.45-1.200 3.200-2.500.45z" fill="#fff"/><path d="M175.5 387.5l2.500-.45-1.200 3.200-2.500.45z" fill="#fff"/><path d="M180.1 386.65l2.500-.45-1.200 3.200-2.500.45z" fill="#fff"/><path d="M164.5 393.8h19.500" stroke="#555" stroke-width=".8"/><path d="M166.500 403.500h15M166.500 403l9-6" fill="none" stroke="#4a8a7a" stroke-width=".9"/><path d="M175.500 397a3.300 3.300 0 0 1 6 2.500" fill="none" stroke="#c8506a" stroke-width="1.100"/><rect x="136.3" y="420.8" width="19.500" height="13.500" rx="1.500" fill="#eceee6" stroke="#777" stroke-width=".9"/><path d="M136.3 418.3l19-3.500.6 3-19 3.500z" fill="#222"/><path d="M138.1 418.2l2.500-.45-1.200 3.200-2.500.45z" fill="#fff"/><path d="M142.7 417.35l2.500-.45-1.200 3.200-2.500.45z" fill="#fff"/><path d="M147.3 416.5l2.500-.45-1.200 3.200-2.500.45z" fill="#fff"/><path d="M151.9 415.65l2.500-.45-1.200 3.200-2.500.45z" fill="#fff"/><path d="M136.3 422.8h19.500" stroke="#555" stroke-width=".8"/><path d="M137 427.500h18M139.500 423v9" stroke="#4a8a5a" stroke-width=".8"/><path d="M139.500 427.500c1.500-6 4.500-6 6 0s4.500 6 6 0" fill="none" stroke="#c8506a" stroke-width="1.100"/><rect x="164.800" y="416" width="4.200" height="4.800" fill="#fff" stroke="#333" stroke-width=".8"/><path d="M171.500 418.4h13" stroke="#3a7a9a" stroke-width="1.500" stroke-dasharray="3 1.600"/><rect x="164.800" y="423" width="4.200" height="4.800" fill="#4a6a4a" stroke="#333" stroke-width=".8"/><path d="M171.500 425.4h13" stroke="#3a7a9a" stroke-width="1.500" stroke-dasharray="3 1.600"/><rect x="164.800" y="430" width="4.200" height="4.800" fill="#fff" stroke="#333" stroke-width=".8"/><path d="M171.500 432.4h13" stroke="#3a7a9a" stroke-width="1.500" stroke-dasharray="3 1.600"/></svg><svg class="b" style="left:131px;top:446px;" width="58" height="302" viewBox="131 446 58 302"><defs><linearGradient id="yg" x1="0" y1="0" x2="0" y2="1"><stop offset="0" stop-color="#fdf0a8"/><stop offset="1" stop-color="#f3c94a"/></linearGradient><linearGradient id="rb2" x1="0" y1="0" x2="1" y2="1"><stop offset="0" stop-color="#e8201a"/><stop offset=".3" stop-color="#f0d020"/><stop offset=".6" stop-color="#30c030"/><stop offset="1" stop-color="#2060e0"/></linearGradient></defs><path d="M146 460L146 453.98" stroke="#1f5fb0" stroke-width="1.7" fill="none"/><path d="M146 449.5L148.8 453.98L143.2 453.98z" fill="#1f5fb0"/><path d="M146 460L140.2 465.67" stroke="#1f5fb0" stroke-width="1.7" fill="none"/><path d="M137 468.8L138.25 463.67L142.16 467.67z" fill="#1f5fb0"/><path d="M146 460L152.05 465.72" stroke="#1f5fb0" stroke-width="1.7" fill="none"/><path d="M155.3 468.8L150.12 467.75L153.97 463.69z" fill="#1f5fb0"/><rect x="164.2" y="450.5" width="20.500" height="16.500" rx="1.500" fill="#fbfbf2" stroke="#8a8a6a" stroke-width=".8"/><path d="M164.2 454.5h20.500v-2.500a1.500 1.500 0 0 0-1.500-1.500h-17.500a1.500 1.500 0 0 0-1.500 1.500z" fill="#2f73c0"/><rect x="165.7" y="451.7" width="2.500" height="1" fill="#d8e8fa"/><path d="M167.2 457.3h3.500M172.7 457.3h9" stroke="#4a4a3a" stroke-width="1"/><path d="M167.2 459.5h3.500M172.7 459.5h9" stroke="#4a4a3a" stroke-width="1"/><path d="M167.2 461.7h3.500M172.7 461.7h9" stroke="#4a4a3a" stroke-width="1"/><rect x="164.2" y="463" width="20.500" height="4" fill="#e6e2b8" stroke="#8a8a6a" stroke-width=".5"/><rect x="167" y="464.2" width="3.800" height="1.800" fill="#7a7a3a"/><rect x="172.6" y="464.2" width="3.800" height="1.800" fill="#7a7a3a"/><rect x="178.2" y="464.2" width="3.800" height="1.800" fill="#7a7a3a"/><rect x="135.500" y="484.800" width="21" height="19.500" rx="1" fill="#fff" stroke="#222" stroke-width="1"/><rect x="136" y="485.300" width="20" height="6.200" fill="#f6d0d4"/><path d="M146 484.800v19.500M135.500 491.600h21M135.500 495.800h21M135.500 500h21" stroke="#444" stroke-width=".8"/><text x="138.3" y="490.8" font-family="Liberation Sans,sans-serif" font-weight="700" font-size="6.5" fill="#c02020" >X</text><text x="148.8" y="490.8" font-family="Liberation Sans,sans-serif" font-weight="700" font-size="6.5" fill="#c02020" >Y</text><rect x="164.2" y="485.5" width="20.500" height="16.500" rx="1.500" fill="#fbfbf2" stroke="#8a8a6a" stroke-width=".8"/><path d="M164.2 489.5h20.500v-2.500a1.500 1.500 0 0 0-1.500-1.500h-17.500a1.500 1.500 0 0 0-1.500 1.500z" fill="#2f73c0"/><rect x="165.7" y="486.7" width="2.500" height="1" fill="#d8e8fa"/><path d="M167.2 492.3h3.500M172.7 492.3h9" stroke="#4a4a3a" stroke-width="1"/><path d="M167.2 494.5h3.500M172.7 494.5h9" stroke="#4a4a3a" stroke-width="1"/><path d="M167.2 496.7h3.500M172.7 496.7h9" stroke="#4a4a3a" stroke-width="1"/><rect x="164.2" y="498" width="20.500" height="4" fill="#e6e2b8" stroke="#8a8a6a" stroke-width=".5"/><rect x="167" y="499.2" width="3.800" height="1.800" fill="#7a7a3a"/><rect x="172.6" y="499.2" width="3.800" height="1.800" fill="#7a7a3a"/><rect x="178.2" y="499.2" width="3.800" height="1.800" fill="#7a7a3a"/><path d="M136.800 518.500v9M136.800 523h17M141 520.800v4.400M145 520.800v4.400M149 520.800v4.400M150.500 519l4 4-4 4" fill="none" stroke="#2a3a78" stroke-width="1.300"/><path d="M155.300 533.500l2.500-2.500v2.500z" fill="#111"/><path d="M165.800 526l4.500-8 5.500 8 7-8.500" fill="none" stroke="#c8382a" stroke-width="1.200"/><rect x="164.4" y="524.6" width="2.800" height="2.800" fill="#c8382a"/><rect x="168.9" y="516.6" width="2.800" height="2.800" fill="#c8382a"/><rect x="174.4" y="524.6" width="2.800" height="2.800" fill="#c8382a"/><rect x="181.4" y="516.1" width="2.800" height="2.800" fill="#c8382a"/><path d="M140 553.5c3-3 5 1 8-1.500s4-2 7.500-.5l-2.500 9c-3-1.500-5 .5-7.500 1.500s-5-1-8 1.500z" fill="#f7dc5a" stroke="#a8821a" stroke-width=".8"/><path d="M145.5 552.5l-2.500 8.500M150.5 552l-2.500 8.500M138.8 558c3-3 5 1 8-1.500s4-2 7.500-.5" fill="none" stroke="#a8821a" stroke-width=".6"/><path d="M168.5 549.5c3-3 5 1 8-1.500s4-2 7.500-.5l-2.500 9c-3-1.500-5 .5-7.500 1.500s-5-1-8 1.500z" fill="#f7dc5a" stroke="#a8821a" stroke-width=".8"/><path d="M174 548.5l-2.500 8.500M179 548l-2.500 8.500M167.3 554c3-3 5 1 8-1.500s4-2 7.500-.5" fill="none" stroke="#a8821a" stroke-width=".6"/><path d="M166.500 559.500h5v4h-5zM170 562h5v4h-5zM174 564.500h5v4h-5z" fill="#fff" fill-opacity=".6" stroke="#2a4f9a" stroke-width="1"/><path d="M136 583h5.500v11h7v7.500h-12.500z" fill="url(#rb2)"/><path d="M136 583h5.500v4h-5.500z" fill="#e8201a"/><rect x="148.500" y="594" width="7" height="7.500" fill="#fff" stroke="#111" stroke-width="1"/><path d="M148.500 583v20" stroke="#a02020" stroke-width=".9" stroke-dasharray="2 1.200"/><rect x="164.2" y="583.8" width="20.500" height="16.500" rx="1.500" fill="#fbfbf2" stroke="#8a8a6a" stroke-width=".8"/><path d="M164.2 587.8h20.500v-2.500a1.500 1.500 0 0 0-1.500-1.500h-17.500a1.500 1.500 0 0 0-1.500 1.500z" fill="#2f73c0"/><rect x="165.7" y="585" width="2.500" height="1" fill="#d8e8fa"/><path d="M167.2 590.6h3.500M172.7 590.6h9" stroke="#4a4a3a" stroke-width="1"/><path d="M167.2 592.8h3.500M172.7 592.8h9" stroke="#4a4a3a" stroke-width="1"/><path d="M167.2 595h3.500M172.7 595h9" stroke="#4a4a3a" stroke-width="1"/><rect x="164.2" y="596.3" width="20.500" height="4" fill="#e6e2b8" stroke="#8a8a6a" stroke-width=".5"/><rect x="167" y="597.5" width="3.800" height="1.800" fill="#7a7a3a"/><rect x="172.6" y="597.5" width="3.800" height="1.800" fill="#7a7a3a"/><rect x="178.2" y="597.5" width="3.800" height="1.800" fill="#7a7a3a"/><rect x="139" y="617.8" width="3.600" height="3.600" fill="url(#yg)" stroke="#a8821a" stroke-width=".7"/><rect x="139" y="621.4" width="3.600" height="3.600" fill="url(#yg)" stroke="#a8821a" stroke-width=".7"/><rect x="139" y="625" width="3.600" height="3.600" fill="url(#yg)" stroke="#a8821a" stroke-width=".7"/><rect x="139" y="628.6" width="3.600" height="3.600" fill="url(#yg)" stroke="#a8821a" stroke-width=".7"/><rect x="139" y="632.2" width="3.600" height="3.600" fill="url(#yg)" stroke="#a8821a" stroke-width=".7"/><rect x="142.6" y="617.8" width="3.600" height="3.600" fill="url(#yg)" stroke="#a8821a" stroke-width=".7"/><rect x="142.6" y="621.4" width="3.600" height="3.600" fill="url(#yg)" stroke="#a8821a" stroke-width=".7"/><rect x="142.6" y="625" width="3.600" height="3.600" fill="url(#yg)" stroke="#a8821a" stroke-width=".7"/><rect x="142.6" y="628.6" width="3.600" height="3.600" fill="url(#yg)" stroke="#a8821a" stroke-width=".7"/><rect x="142.6" y="632.2" width="3.600" height="3.600" fill="url(#yg)" stroke="#a8821a" stroke-width=".7"/><path d="M147 627.5L152.46 620.84" stroke="#b0432a" stroke-width="1.3" fill="none"/><path d="M154.8 618L154.24 622.3L150.69 619.38z" fill="#b0432a"/><path d="M147 627.5L150.94 629.75" stroke="#b0432a" stroke-width="1.3" fill="none"/><path d="M154 631.5L149.85 631.66L152.04 627.84z" fill="#b0432a"/><rect x="164.2" y="618.8" width="20.500" height="16.500" rx="1.500" fill="#fbfbf2" stroke="#8a8a6a" stroke-width=".8"/><path d="M164.2 622.8h20.500v-2.500a1.500 1.500 0 0 0-1.500-1.500h-17.500a1.500 1.500 0 0 0-1.500 1.500z" fill="#2f73c0"/><rect x="165.7" y="620" width="2.500" height="1" fill="#d8e8fa"/><path d="M167.2 625.6h3.500M172.7 625.6h9" stroke="#4a4a3a" stroke-width="1"/><path d="M167.2 627.8h3.500M172.7 627.8h9" stroke="#4a4a3a" stroke-width="1"/><path d="M167.2 630h3.500M172.7 630h9" stroke="#4a4a3a" stroke-width="1"/><rect x="164.2" y="631.3" width="20.500" height="4" fill="#e6e2b8" stroke="#8a8a6a" stroke-width=".5"/><rect x="167" y="632.5" width="3.800" height="1.800" fill="#7a7a3a"/><rect x="172.6" y="632.5" width="3.800" height="1.800" fill="#7a7a3a"/><rect x="178.2" y="632.5" width="3.800" height="1.800" fill="#7a7a3a"/><rect x="134.500" y="651" width="23.500" height="20.300" fill="#2aa838"/><path d="M134.500 651h23.500v3c-8 0-10 3.500-23.500 3.500zM134.500 671.300h23.500v-3c-8 0-10-3.500-23.500-3.500z" fill="#f0d828"/><path d="M134.500 654.500c13 0 15-3.500 23.500-3.500M134.500 667.800c13 0 15 3.500 23.500 3.500" fill="none" stroke="#222" stroke-width=".9"/><path d="M145 661.200c4-5 9-6 13-6v12c-4 0-9-1-13-6z" fill="#1f5fd0"/><circle cx="146.300" cy="661.200" r="3" fill="#2890c8" stroke="#114" stroke-width=".7"/><rect x="164.2" y="653.3" width="20.500" height="16.500" rx="1.500" fill="#fbfbf2" stroke="#8a8a6a" stroke-width=".8"/><path d="M164.2 657.3h20.500v-2.500a1.500 1.500 0 0 0-1.500-1.500h-17.500a1.500 1.500 0 0 0-1.500 1.500z" fill="#2f73c0"/><rect x="165.7" y="654.5" width="2.500" height="1" fill="#d8e8fa"/><path d="M167.2 660.1h3.500M172.7 660.1h9" stroke="#4a4a3a" stroke-width="1"/><path d="M167.2 662.3h3.500M172.7 662.3h9" stroke="#4a4a3a" stroke-width="1"/><path d="M167.2 664.5h3.500M172.7 664.5h9" stroke="#4a4a3a" stroke-width="1"/><rect x="164.2" y="665.8" width="20.500" height="4" fill="#e6e2b8" stroke="#8a8a6a" stroke-width=".5"/><rect x="167" y="667" width="3.800" height="1.800" fill="#7a7a3a"/><rect x="172.6" y="667" width="3.800" height="1.800" fill="#7a7a3a"/><rect x="178.2" y="667" width="3.800" height="1.800" fill="#7a7a3a"/><rect x="135.300" y="686" width="7.300" height="7.300" fill="#3a4a6a" stroke="#2a3448" stroke-width=".6"/><rect x="145.800" y="695.500" width="7.300" height="7.300" fill="#2f4a78" stroke="#1a2a48" stroke-width=".6"/><rect x="149.300" y="700" width="7.300" height="7.300" fill="#3a5a8a" stroke="#1a2a48" stroke-width=".6"/><path d="M145.500 688.500c3.500-.5 6 2 6.300 5" fill="none" stroke="#b0432a" stroke-width="1.400"/><path d="M143.800 688.600l3.200-2v3.800zM151.900 695.500l-2-3 3.800-.3z" fill="#b0432a"/><rect x="164.2" y="688.5" width="20.500" height="16.500" rx="1.500" fill="#fbfbf2" stroke="#8a8a6a" stroke-width=".8"/><path d="M164.2 692.5h20.500v-2.500a1.500 1.500 0 0 0-1.500-1.500h-17.500a1.500 1.500 0 0 0-1.500 1.500z" fill="#2f73c0"/><rect x="165.7" y="689.7" width="2.500" height="1" fill="#d8e8fa"/><path d="M167.2 695.3h3.500M172.7 695.3h9" stroke="#4a4a3a" stroke-width="1"/><path d="M167.2 697.5h3.500M172.7 697.5h9" stroke="#4a4a3a" stroke-width="1"/><path d="M167.2 699.7h3.500M172.7 699.7h9" stroke="#4a4a3a" stroke-width="1"/><rect x="164.2" y="701" width="20.500" height="4" fill="#e6e2b8" stroke="#8a8a6a" stroke-width=".5"/><rect x="167" y="702.2" width="3.800" height="1.800" fill="#7a7a3a"/><rect x="172.6" y="702.2" width="3.800" height="1.800" fill="#7a7a3a"/><rect x="178.2" y="702.2" width="3.800" height="1.800" fill="#7a7a3a"/><path d="M136.500 723.500l10 13" stroke="#222" stroke-width="3.200" stroke-linecap="round"/><path d="M147 737l3 3.500" stroke="#c8b86a" stroke-width="1.200"/><path d="M149 743.500l6.500-5 2 2.500-6.500 5z" fill="#78c838" stroke="#c8d83a" stroke-width=".8"/><path d="M135.500 721c2-1 4-.5 5.500.2M145 721.500l3-1" stroke="#222" stroke-width=".8" fill="none"/></svg></div>
<div class="g" id="viewports"><div class="b" style="left:191px;top:166px;width:1511px;height:657px;background:#444b53;"></div><section class="vp" style="left:191px;top:166px;width:756px;height:164px;border-style:solid;border-color:#454c54;border-width:2px 1px 0px 2px;background:#f2f5f9;border-radius:4.500px 4.500px 0 0;"><div class="b" style="left:0px;top:0px;width:753px;height:1px;background:#fbfdff;"></div><div class="vt" style="left:0px;top:1px;width:753px;height:23.7px;"></div><svg class="b" style="left:7px;top:8.2px;" width="14" height="13" viewBox="200 176.2 14 13"><rect x="200.5" y="176.7" width="13" height="12" fill="#fff" stroke="#3d62a8" stroke-width="1"/><rect x="201" y="177.2" width="12" height="2.200" fill="#4a78c0"/><circle cx="207" cy="183.8" r="3.900" fill="#1c2466"/><rect x="203" y="183.1" width="8" height="1.500" fill="#fff"/></svg><span class="t" style="left:26.40px;top:4.60px;font-size:12.5px;font-family:'Liberation Sans','Noto Sans CJK SC',sans-serif;color:#10182c;letter-spacing:0.200px;">Viewport: 1</span><span class="t" style="left:112.25px;top:4.60px;font-size:12.5px;font-family:'Liberation Sans','Noto Sans CJK SC',sans-serif;color:#10182c;letter-spacing:0.318px;">ODB: D:/Users/Administrator/De...sktop/Job-1-Frequency.odb</span><div class="wb" style="left:693.2px;top:7.2px;width:15.5px;height:13.5px;"><div class="b" style="left:1px;top:5.300px;width:10.600px;height:4.300px;border:1.200px solid #4a5868;border-radius:1.500px;background:#fff"></div></div><div class="wb" style="left:712.3px;top:7.2px;width:15.5px;height:13.5px;"><div class="b" style="left:1px;top:1.200px;width:10.800px;height:8.400px;border:1.200px solid #4a5868;border-radius:1px;background:#f8fafd"></div><div class="b" style="left:4px;top:4px;width:4.600px;height:2.800px;border:1.100px solid #4a5868"></div></div><div class="wb" style="left:731.1px;top:7.2px;width:15.8px;height:13.7px;border-color:#3d1a22;border-width:1.300px;background:linear-gradient(#e2b8bb,#c98890 50%,#d8a3a8);"></div><svg class="b" style="left:731.1px;top:7.2px;" width="15.8" height="13.7" viewBox="924.1 175.2 15.8 13.7"><path d="M927.2 178.5l9.600 7M936.8 178.5l-9.600 7" stroke="#fff" stroke-width="2.700" fill="none"/></svg><div class="vc" style="left:3.5px;top:24.7px;width:746.2px;height:132.05px;"><div class="b" style="left:14.5px;top:2.6px;width:167.2px;height:160px;border:1px solid #000;"></div><span class="t" style="left:28.90px;top:17.90px;font-size:14.4px;font-family:'DejaVu Sans',sans-serif;font-weight:200;letter-spacing:0.230px;-webkit-text-stroke:.3px #000;">U, Magnitude</span><div class="b" style="left:29.5px;top:47.6px;width:24px;height:16px;background:#ff0000;border:1px solid #1a1208;"></div><div class="b" style="left:52.5px;top:47.6px;width:7.3px;height:1px;background:#000;"></div><span class="t" style="left:68.80px;top:36.80px;font-size:14.6px;font-family:'DejaVu Sans',sans-serif;font-weight:200;letter-spacing:0.378px;-webkit-text-stroke:.3px #000;">+1.867e+02</span><div class="b" style="left:29.5px;top:62.6px;width:24px;height:16px;background:#ff5d00;border:1px solid #1a1208;"></div><div class="b" style="left:52.5px;top:62.6px;width:7.3px;height:1px;background:#000;"></div><span class="t" style="left:68.80px;top:51.80px;font-size:14.6px;font-family:'DejaVu Sans',sans-serif;font-weight:200;letter-spacing:0.378px;-webkit-text-stroke:.3px #000;">+1.711e+02</span><div class="b" style="left:29.5px;top:77.6px;width:24px;height:16px;background:#ffb900;border:1px solid #1a1208;"></div><div class="b" style="left:52.5px;top:77.6px;width:7.3px;height:1px;background:#000;"></div><span class="t" style="left:68.80px;top:66.80px;font-size:14.6px;font-family:'DejaVu Sans',sans-serif;font-weight:200;letter-spacing:0.378px;-webkit-text-stroke:.3px #000;">+1.556e+02</span><div class="b" style="left:29.5px;top:92.6px;width:24px;height:16px;background:#fff700;border:1px solid #1a1208;"></div><div class="b" style="left:52.5px;top:92.6px;width:7.3px;height:1px;background:#000;"></div><span class="t" style="left:68.80px;top:81.80px;font-size:14.6px;font-family:'DejaVu Sans',sans-serif;font-weight:200;letter-spacing:0.378px;-webkit-text-stroke:.3px #000;">+1.400e+02</span><div class="b" style="left:29.5px;top:107.6px;width:24px;height:16px;background:#8bf000;border:1px solid #1a1208;"></div><div class="b" style="left:52.5px;top:107.6px;width:7.3px;height:1px;background:#000;"></div><span class="t" style="left:68.80px;top:96.80px;font-size:14.6px;font-family:'DejaVu Sans',sans-serif;font-weight:200;letter-spacing:0.378px;-webkit-text-stroke:.3px #000;">+1.245e+02</span><div class="b" style="left:29.5px;top:122.6px;width:24px;height:16px;background:#2ee000;border:1px solid #1a1208;"></div><div class="b" style="left:52.5px;top:122.6px;width:7.3px;height:1px;background:#000;"></div><span class="t" style="left:68.80px;top:111.80px;font-size:14.6px;font-family:'DejaVu Sans',sans-serif;font-weight:200;letter-spacing:0.378px;-webkit-text-stroke:.3px #000;">+1.089e+02</span><span class="t" style="left:104.50px;top:117.10px;font-size:13.6px;font-family:'DejaVu Sans',sans-serif;font-weight:200;letter-spacing:1.045px;-webkit-text-stroke:.22px #000;">Step: Step-1</span><svg class="b" style="left:323.5px;top:7.3px" width="170" height="130" viewBox="520 200 170 130"><defs><filter id="mb1" x="-5%" y="-5%" width="110%" height="110%"><feGaussianBlur stdDeviation="1.300"/></filter><clipPath id="mc1"><polygon points="529.84,263.29 531.61,266.43 629.2,319.56 680.85,293 680.85,288.86 675.24,285.13 674.65,270.17 665.79,263.29 658.91,261.32 657.92,252.46 646.91,246.56 631.17,240.66 619.36,235.74 611.49,229.84 604.6,226.89 595.75,229.35 586.9,231.81 579.03,230.82 573.12,228.85 571.35,237.71 558.86,243.12 558.37,239.68 548.53,234.26 540.17,241.15 539.18,259.35"/></clipPath><filter id="mb12"><feGaussianBlur stdDeviation="0.350"/></filter></defs><polygon points="529.84,263.29 531.61,266.43 629.2,319.56 680.85,293 680.85,288.86 675.24,285.13 674.65,270.17 665.79,263.29 658.91,261.32 657.92,252.46 646.91,246.56 631.17,240.66 619.36,235.74 611.49,229.84 604.6,226.89 595.75,229.35 586.9,231.81 579.03,230.82 573.12,228.85 571.35,237.71 558.86,243.12 558.37,239.68 548.53,234.26 540.17,241.15 539.18,259.35" fill="#0000e2"/><g clip-path="url(#mc1)"><g filter="url(#mb1)"><polygon points="573.12,237.71 588.86,233.28 604.6,229.35 618.38,237.22 646.91,248.53 656.74,254.43 657.73,262.3 647.89,266.24 628.21,257.88 608.54,250 592.8,252.96 582.96,249.02 575.09,245.09" fill="#0000b6"/><polygon points="556.4,248.53 573.62,242.82 575.58,261.81 559.35,266.43" fill="#0a0af6"/><polygon points="541.15,242.63 548.53,236.23 557.38,241.15 557.88,252.46 549.51,257.38 541.15,259.35" fill="#0000c2"/><polygon points="600.67,273.62 618.38,282.96 637.07,292.8 637.07,299.69 616.41,291.82 600.67,283.94" fill="#0000aa"/><polygon points="636.58,275.09 651.33,271.16 652.32,288.86 638.54,294.77" fill="#0000b2"/><polygon points="604.6,289.36 620.34,295.26 621.33,309.03 605.59,302.14" fill="#0606f2"/><polygon points="622.31,297.72 634.12,292.8 635.1,308.54 624.28,312.47" fill="#0000bc"/><polygon points="659.7,264.27 673.47,271.16 673.96,283.94 660.68,279.03" fill="#0707ee"/><polygon points="579.03,261.32 600.67,271.16 600.67,279.03 579.03,269.19" fill="#0000b4"/><polygon points="532.79,264.76 628.71,316.9 629.2,318.87 532.3,266.24" fill="#0000c8"/></g></g><g filter="url(#mb12)"><path d="M620.34 256.15l1.7 2.38l2.04 0.34l-1.7 1.7l0.68 3.06l-3.06 -2.04l-1.7 -1.02z" fill="#f59a1e"/><path d="M606.77 265l1.7 2.38l2.04 0.34l-1.7 1.7l0.68 3.06l-3.06 -2.04l-1.7 -1.02z" fill="#f2d23a"/><circle cx="619.16" cy="276.27" r="2.800" fill="#061a8c"/><ellipse cx="625.26" cy="277.06" rx="1.800" ry="3" fill="#1fc09a"/></g></svg></div></section><section class="vp" style="left:947px;top:166px;width:755px;height:164px;border-style:solid;border-color:#454c54;border-width:2px 1px 0px 1px;background:#f2f5f9;border-radius:4.500px 4.500px 0 0;"><div class="b" style="left:0px;top:0px;width:753px;height:1px;background:#fbfdff;"></div><div class="vt" style="left:0px;top:1px;width:753px;height:23.7px;"></div><svg class="b" style="left:7px;top:8.2px;" width="14" height="13" viewBox="955 176.2 14 13"><rect x="955.5" y="176.7" width="13" height="12" fill="#fff" stroke="#3d62a8" stroke-width="1"/><rect x="956" y="177.2" width="12" height="2.200" fill="#4a78c0"/><circle cx="962" cy="183.8" r="3.900" fill="#1c2466"/><rect x="958" y="183.1" width="8" height="1.500" fill="#fff"/></svg><span class="t" style="left:26.40px;top:4.60px;font-size:12.5px;font-family:'Liberation Sans','Noto Sans CJK SC',sans-serif;color:#10182c;letter-spacing:0.200px;">Viewport: 2</span><span class="t" style="left:112.25px;top:4.60px;font-size:12.5px;font-family:'Liberation Sans','Noto Sans CJK SC',sans-serif;color:#10182c;letter-spacing:0.318px;">ODB: D:/Users/Administrator/De...sktop/Job-1-Frequency.odb</span><div class="wb" style="left:693.2px;top:7.2px;width:15.5px;height:13.5px;"><div class="b" style="left:1px;top:5.300px;width:10.600px;height:4.300px;border:1.200px solid #4a5868;border-radius:1.500px;background:#fff"></div></div><div class="wb" style="left:712.3px;top:7.2px;width:15.5px;height:13.5px;"><div class="b" style="left:1px;top:1.200px;width:10.800px;height:8.400px;border:1.200px solid #4a5868;border-radius:1px;background:#f8fafd"></div><div class="b" style="left:4px;top:4px;width:4.600px;height:2.800px;border:1.100px solid #4a5868"></div></div><div class="wb" style="left:731.1px;top:7.2px;width:15.8px;height:13.7px;border-color:#3d1a22;border-width:1.300px;background:linear-gradient(#e2b8bb,#c98890 50%,#d8a3a8);"></div><svg class="b" style="left:731.1px;top:7.2px;" width="15.8" height="13.7" viewBox="1679.1 175.2 15.8 13.7"><path d="M1682.2 178.5l9.600 7M1691.8 178.5l-9.600 7" stroke="#fff" stroke-width="2.700" fill="none"/></svg><div class="vc" style="left:3.5px;top:24.7px;width:746.2px;height:132.05px;"><div class="b" style="left:14.5px;top:2.6px;width:167.2px;height:160px;border:1px solid #000;"></div><span class="t" style="left:28.90px;top:17.90px;font-size:14.4px;font-family:'DejaVu Sans',sans-serif;font-weight:200;letter-spacing:0.230px;-webkit-text-stroke:.3px #000;">U, Magnitude</span><div class="b" style="left:29.5px;top:47.6px;width:24px;height:16px;background:#ff0000;border:1px solid #1a1208;"></div><div class="b" style="left:52.5px;top:47.6px;width:7.3px;height:1px;background:#000;"></div><span class="t" style="left:68.80px;top:36.80px;font-size:14.6px;font-family:'DejaVu Sans',sans-serif;font-weight:200;letter-spacing:0.378px;-webkit-text-stroke:.3px #000;">+1.599e+02</span><div class="b" style="left:29.5px;top:62.6px;width:24px;height:16px;background:#ff5d00;border:1px solid #1a1208;"></div><div class="b" style="left:52.5px;top:62.6px;width:7.3px;height:1px;background:#000;"></div><span class="t" style="left:68.80px;top:51.80px;font-size:14.6px;font-family:'DejaVu Sans',sans-serif;font-weight:200;letter-spacing:0.378px;-webkit-text-stroke:.3px #000;">+1.466e+02</span><div class="b" style="left:29.5px;top:77.6px;width:24px;height:16px;background:#ffb900;border:1px solid #1a1208;"></div><div class="b" style="left:52.5px;top:77.6px;width:7.3px;height:1px;background:#000;"></div><span class="t" style="left:68.80px;top:66.80px;font-size:14.6px;font-family:'DejaVu Sans',sans-serif;font-weight:200;letter-spacing:0.378px;-webkit-text-stroke:.3px #000;">+1.332e+02</span><div class="b" style="left:29.5px;top:92.6px;width:24px;height:16px;background:#fff700;border:1px solid #1a1208;"></div><div class="b" style="left:52.5px;top:92.6px;width:7.3px;height:1px;background:#000;"></div><span class="t" style="left:68.80px;top:81.80px;font-size:14.6px;font-family:'DejaVu Sans',sans-serif;font-weight:200;letter-spacing:0.378px;-webkit-text-stroke:.3px #000;">+1.199e+02</span><div class="b" style="left:29.5px;top:107.6px;width:24px;height:16px;background:#8bf000;border:1px solid #1a1208;"></div><div class="b" style="left:52.5px;top:107.6px;width:7.3px;height:1px;background:#000;"></div><span class="t" style="left:68.80px;top:96.80px;font-size:14.6px;font-family:'DejaVu Sans',sans-serif;font-weight:200;letter-spacing:0.378px;-webkit-text-stroke:.3px #000;">+1.066e+02</span><div class="b" style="left:29.5px;top:122.6px;width:24px;height:16px;background:#2ee000;border:1px solid #1a1208;"></div><div class="b" style="left:52.5px;top:122.6px;width:7.3px;height:1px;background:#000;"></div><span class="t" style="left:68.80px;top:111.80px;font-size:14.6px;font-family:'DejaVu Sans',sans-serif;font-weight:200;letter-spacing:0.378px;-webkit-text-stroke:.3px #000;">+9.326e+01</span><span class="t" style="left:104.50px;top:117.10px;font-size:13.6px;font-family:'DejaVu Sans',sans-serif;font-weight:200;letter-spacing:1.045px;-webkit-text-stroke:.22px #000;">Step: Step-1</span><svg class="b" style="left:323.5px;top:7.3px" width="170" height="130" viewBox="520 200 170 130"><defs><filter id="mb2" x="-5%" y="-5%" width="110%" height="110%"><feGaussianBlur stdDeviation="1.300"/></filter><clipPath id="mc2"><polygon points="529.84,263.29 531.61,266.43 629.2,319.56 680.85,293 680.85,288.86 675.24,285.13 674.65,270.17 665.79,263.29 658.91,261.32 657.92,252.46 646.91,246.56 631.17,240.66 619.36,235.74 611.49,229.84 604.6,226.89 595.75,229.35 586.9,231.81 579.03,230.82 573.12,228.85 571.35,237.71 558.86,243.12 558.37,239.68 548.53,234.26 540.17,241.15 539.18,259.35"/></clipPath><filter id="mb22"><feGaussianBlur stdDeviation="0.350"/></filter></defs><polygon points="529.84,263.29 531.61,266.43 629.2,319.56 680.85,293 680.85,288.86 675.24,285.13 674.65,270.17 665.79,263.29 658.91,261.32 657.92,252.46 646.91,246.56 631.17,240.66 619.36,235.74 611.49,229.84 604.6,226.89 595.75,229.35 586.9,231.81 579.03,230.82 573.12,228.85 571.35,237.71 558.86,243.12 558.37,239.68 548.53,234.26 540.17,241.15 539.18,259.35" fill="#0000e2"/><g clip-path="url(#mc2)"><g filter="url(#mb2)"><polygon points="573.12,237.71 588.86,233.28 604.6,229.35 618.38,237.22 646.91,248.53 656.74,254.43 657.73,262.3 647.89,266.24 628.21,257.88 608.54,250 592.8,252.96 582.96,249.02 575.09,245.09" fill="#0000b6"/><polygon points="556.4,248.53 573.62,242.82 575.58,261.81 559.35,266.43" fill="#0a0af6"/><polygon points="541.15,242.63 548.53,236.23 557.38,241.15 557.88,252.46 549.51,257.38 541.15,259.35" fill="#0000c2"/><polygon points="600.67,273.62 618.38,282.96 637.07,292.8 637.07,299.69 616.41,291.82 600.67,283.94" fill="#0000aa"/><polygon points="636.58,275.09 651.33,271.16 652.32,288.86 638.54,294.77" fill="#0000b2"/><polygon points="604.6,289.36 620.34,295.26 621.33,309.03 605.59,302.14" fill="#0606f2"/><polygon points="622.31,297.72 634.12,292.8 635.1,308.54 624.28,312.47" fill="#0000bc"/><polygon points="659.7,264.27 673.47,271.16 673.96,283.94 660.68,279.03" fill="#0707ee"/><polygon points="579.03,261.32 600.67,271.16 600.67,279.03 579.03,269.19" fill="#0000b4"/><polygon points="532.79,264.76 628.71,316.9 629.2,318.87 532.3,266.24" fill="#0000c8"/></g></g><g filter="url(#mb22)"><polygon points="612.67,259.01 620.31,258.38 619.03,269.83 611.39,269.83" fill="#58d820"/><polygon points="611.78,260.92 615.21,260.29 614.58,270.47 610.5,271.11" fill="#d8e820"/><polygon points="610.12,271.11 616.49,270.85 616.49,278.75 609.74,276.2" fill="#f0a81c"/><polygon points="616.49,271.11 620.94,271.74 620.94,281.29 616.87,279.38" fill="#1fa82c"/><circle cx="615.21" cy="292.75" r="1.100" fill="#9aa0d0"/></g></svg></div></section><section class="vp" style="left:191px;top:330px;width:756px;height:164px;border-style:solid;border-color:#454c54;border-width:1px 1px 1px 2px;background:#f2f5f9;border-radius:4.500px 4.500px 0 0;"><div class="b" style="left:0px;top:0px;width:753px;height:1.3px;background:#fbfdff;"></div><div class="vt" style="left:0px;top:1.3px;width:753px;height:23.7px;"></div><svg class="b" style="left:7px;top:8.4px;" width="14" height="13" viewBox="200 339.4 14 13"><rect x="200.5" y="339.9" width="13" height="12" fill="#fff" stroke="#3d62a8" stroke-width="1"/><rect x="201" y="340.4" width="12" height="2.200" fill="#4a78c0"/><circle cx="207" cy="347" r="3.900" fill="#1c2466"/><rect x="203" y="346.3" width="8" height="1.500" fill="#fff"/></svg><span class="t" style="left:26.40px;top:3.80px;font-size:12.5px;font-family:'Liberation Sans','Noto Sans CJK SC',sans-serif;color:#10182c;letter-spacing:0.200px;">Viewport: 3</span><span class="t" style="left:112.25px;top:3.80px;font-size:12.5px;font-family:'Liberation Sans','Noto Sans CJK SC',sans-serif;color:#10182c;letter-spacing:0.318px;">ODB: D:/Users/Administrator/De...sktop/Job-1-Frequency.odb</span><div class="wb" style="left:693.2px;top:7.5px;width:15.5px;height:13.5px;"><div class="b" style="left:1px;top:5.300px;width:10.600px;height:4.300px;border:1.200px solid #4a5868;border-radius:1.500px;background:#fff"></div></div><div class="wb" style="left:712.3px;top:7.5px;width:15.5px;height:13.5px;"><div class="b" style="left:1px;top:1.200px;width:10.800px;height:8.400px;border:1.200px solid #4a5868;border-radius:1px;background:#f8fafd"></div><div class="b" style="left:4px;top:4px;width:4.600px;height:2.800px;border:1.100px solid #4a5868"></div></div><div class="wb" style="left:731.1px;top:7.5px;width:15.8px;height:13.7px;border-color:#3d1a22;border-width:1.300px;background:linear-gradient(#e2b8bb,#c98890 50%,#d8a3a8);"></div><svg class="b" style="left:731.1px;top:7.5px;" width="15.8" height="13.7" viewBox="924.1 338.5 15.8 13.7"><path d="M927.2 341.8l9.600 7M936.8 341.8l-9.600 7" stroke="#fff" stroke-width="2.700" fill="none"/></svg><div class="vc" style="left:3.5px;top:25px;width:746.2px;height:131.75px;"><div class="b" style="left:14.5px;top:2.3px;width:167.2px;height:160px;border:1px solid #000;"></div><span class="t" style="left:28.90px;top:17.60px;font-size:14.4px;font-family:'DejaVu Sans',sans-serif;font-weight:200;letter-spacing:0.230px;-webkit-text-stroke:.3px #000;">U, Magnitude</span><div class="b" style="left:29.5px;top:47.3px;width:24px;height:16px;background:#ff0000;border:1px solid #1a1208;"></div><div class="b" style="left:52.5px;top:47.3px;width:7.3px;height:1px;background:#000;"></div><span class="t" style="left:68.80px;top:36.50px;font-size:14.6px;font-family:'DejaVu Sans',sans-serif;font-weight:200;letter-spacing:0.378px;-webkit-text-stroke:.3px #000;">+4.500e+00</span><div class="b" style="left:29.5px;top:62.3px;width:24px;height:16px;background:#ff5d00;border:1px solid #1a1208;"></div><div class="b" style="left:52.5px;top:62.3px;width:7.3px;height:1px;background:#000;"></div><span class="t" style="left:68.80px;top:51.50px;font-size:14.6px;font-family:'DejaVu Sans',sans-serif;font-weight:200;letter-spacing:0.378px;-webkit-text-stroke:.3px #000;">+4.125e+00</span><div class="b" style="left:29.5px;top:77.3px;width:24px;height:16px;background:#ffb900;border:1px solid #1a1208;"></div><div class="b" style="left:52.5px;top:77.3px;width:7.3px;height:1px;background:#000;"></div><span class="t" style="left:68.80px;top:66.50px;font-size:14.6px;font-family:'DejaVu Sans',sans-serif;font-weight:200;letter-spacing:0.378px;-webkit-text-stroke:.3px #000;">+3.750e+00</span><div class="b" style="left:29.5px;top:92.3px;width:24px;height:16px;background:#fff700;border:1px solid #1a1208;"></div><div class="b" style="left:52.5px;top:92.3px;width:7.3px;height:1px;background:#000;"></div><span class="t" style="left:68.80px;top:81.50px;font-size:14.6px;font-family:'DejaVu Sans',sans-serif;font-weight:200;letter-spacing:0.378px;-webkit-text-stroke:.3px #000;">+3.375e+00</span><div class="b" style="left:29.5px;top:107.3px;width:24px;height:16px;background:#8bf000;border:1px solid #1a1208;"></div><div class="b" style="left:52.5px;top:107.3px;width:7.3px;height:1px;background:#000;"></div><span class="t" style="left:68.80px;top:96.50px;font-size:14.6px;font-family:'DejaVu Sans',sans-serif;font-weight:200;letter-spacing:0.378px;-webkit-text-stroke:.3px #000;">+3.000e+00</span><div class="b" style="left:29.5px;top:122.3px;width:24px;height:16px;background:#2ee000;border:1px solid #1a1208;"></div><div class="b" style="left:52.5px;top:122.3px;width:7.3px;height:1px;background:#000;"></div><span class="t" style="left:68.80px;top:111.50px;font-size:14.6px;font-family:'DejaVu Sans',sans-serif;font-weight:200;letter-spacing:0.378px;-webkit-text-stroke:.3px #000;">+2.625e+00</span><span class="t" style="left:104.50px;top:116.80px;font-size:13.6px;font-family:'DejaVu Sans',sans-serif;font-weight:200;letter-spacing:1.045px;-webkit-text-stroke:.22px #000;">Step: Step-1</span><svg class="b" style="left:323.5px;top:7px" width="170" height="130" viewBox="520 200 170 130"><defs><filter id="mb3" x="-5%" y="-5%" width="110%" height="110%"><feGaussianBlur stdDeviation="1.300"/></filter><clipPath id="mc3"><polygon points="529.84,263.29 531.61,266.43 629.2,319.56 680.85,293 680.85,288.86 675.24,285.13 674.65,270.17 665.79,263.29 658.91,261.32 657.92,252.46 646.91,246.56 631.17,240.66 619.36,235.74 611.49,229.84 604.6,226.89 595.75,229.35 586.9,231.81 579.03,230.82 573.12,228.85 571.35,237.71 558.86,243.12 558.37,239.68 548.53,234.26 540.17,241.15 539.18,259.35"/></clipPath><filter id="mb32"><feGaussianBlur stdDeviation="0.350"/></filter></defs><polygon points="529.84,263.29 531.61,266.43 629.2,319.56 680.85,293 680.85,288.86 675.24,285.13 674.65,270.17 665.79,263.29 658.91,261.32 657.92,252.46 646.91,246.56 631.17,240.66 619.36,235.74 611.49,229.84 604.6,226.89 595.75,229.35 586.9,231.81 579.03,230.82 573.12,228.85 571.35,237.71 558.86,243.12 558.37,239.68 548.53,234.26 540.17,241.15 539.18,259.35" fill="#0000e2"/><g clip-path="url(#mc3)"><g filter="url(#mb3)"><polygon points="573.12,237.71 588.86,233.28 604.6,229.35 618.38,237.22 646.91,248.53 656.74,254.43 657.73,262.3 647.89,266.24 628.21,257.88 608.54,250 592.8,252.96 582.96,249.02 575.09,245.09" fill="#0000b6"/><polygon points="556.4,248.53 573.62,242.82 575.58,261.81 559.35,266.43" fill="#0a0af6"/><polygon points="541.15,242.63 548.53,236.23 557.38,241.15 557.88,252.46 549.51,257.38 541.15,259.35" fill="#0000c2"/><polygon points="600.67,273.62 618.38,282.96 637.07,292.8 637.07,299.69 616.41,291.82 600.67,283.94" fill="#0000aa"/><polygon points="636.58,275.09 651.33,271.16 652.32,288.86 638.54,294.77" fill="#0000b2"/><polygon points="604.6,289.36 620.34,295.26 621.33,309.03 605.59,302.14" fill="#0606f2"/><polygon points="622.31,297.72 634.12,292.8 635.1,308.54 624.28,312.47" fill="#0000bc"/><polygon points="659.7,264.27 673.47,271.16 673.96,283.94 660.68,279.03" fill="#0707ee"/><polygon points="579.03,261.32 600.67,271.16 600.67,279.03 579.03,269.19" fill="#0000b4"/><polygon points="532.79,264.76 628.71,316.9 629.2,318.87 532.3,266.24" fill="#0000c8"/></g></g><g filter="url(#mb32)"><polygon points="542.01,235.01 561.11,240.1 576.38,249.01 614.58,245.19 640.04,250.28 657.86,257.92 657.86,266.83 627.31,273.2 596.75,263.02 571.29,260.47 542.01,254.1" fill="#1030d8" opacity=".75"/><polygon points="556.02,249.01 573.84,251.56 589.12,260.47 571.29,263.02 556.02,257.92" fill="#1c54e0" opacity=".8"/><polygon points="571.29,231.19 608.21,228.64 627.31,240.1 646.4,249.01 614.58,247.74 589.12,245.19 573.84,240.1" fill="#0a18c8" opacity=".8"/><polygon points="594.84,264.92 610.76,257.29 615.21,257.92 614.58,266.83 601.85,273.2 595.48,273.2" fill="#18a0a8" /><polygon points="601.85,273.2 614.58,266.83 628.58,273.2 627.31,283.38 612.03,283.38" fill="#1048d0" /><polygon points="610.76,294.84 622.22,296.12 627.31,303.75 614.58,303.75" fill="#28b0d8" opacity=".8"/><path d="M613.3 266.83L618.4 257.29L627.31 256.01L634.95 257.92" fill="none" stroke="#8ee820" stroke-width="3.200" stroke-linejoin="round"/><path d="M634.31 257.67L638.13 259.83L634.95 266.83" fill="none" stroke="#e8b428" stroke-width="3" stroke-linejoin="round"/><polygon points="606.3,269.38 612.03,268.74 614.58,273.2 608.21,274.47" fill="#e07818" /><polygon points="587.84,230.55 594.21,229.92 594.84,233.1 589.12,233.99" fill="#20b040" /></g></svg></div></section><section class="vp" style="left:947px;top:330px;width:755px;height:164px;border-style:solid;border-color:#454c54;border-width:1px 1px 1px 1px;background:#f2f5f9;border-radius:4.500px 4.500px 0 0;"><div class="b" style="left:0px;top:0px;width:753px;height:1.3px;background:#fbfdff;"></div><div class="vt" style="left:0px;top:1.3px;width:753px;height:23.7px;"></div><svg class="b" style="left:7px;top:8.4px;" width="14" height="13" viewBox="955 339.4 14 13"><rect x="955.5" y="339.9" width="13" height="12" fill="#fff" stroke="#3d62a8" stroke-width="1"/><rect x="956" y="340.4" width="12" height="2.200" fill="#4a78c0"/><circle cx="962" cy="347" r="3.900" fill="#1c2466"/><rect x="958" y="346.3" width="8" height="1.500" fill="#fff"/></svg><span class="t" style="left:26.40px;top:3.80px;font-size:12.5px;font-family:'Liberation Sans','Noto Sans CJK SC',sans-serif;color:#10182c;letter-spacing:0.200px;">Viewport: 4</span><span class="t" style="left:112.25px;top:3.80px;font-size:12.5px;font-family:'Liberation Sans','Noto Sans CJK SC',sans-serif;color:#10182c;letter-spacing:0.318px;">ODB: D:/Users/Administrator/De...sktop/Job-1-Frequency.odb</span><div class="wb" style="left:693.2px;top:7.5px;width:15.5px;height:13.5px;"><div class="b" style="left:1px;top:5.300px;width:10.600px;height:4.300px;border:1.200px solid #4a5868;border-radius:1.500px;background:#fff"></div></div><div class="wb" style="left:712.3px;top:7.5px;width:15.5px;height:13.5px;"><div class="b" style="left:1px;top:1.200px;width:10.800px;height:8.400px;border:1.200px solid #4a5868;border-radius:1px;background:#f8fafd"></div><div class="b" style="left:4px;top:4px;width:4.600px;height:2.800px;border:1.100px solid #4a5868"></div></div><div class="wb" style="left:731.1px;top:7.5px;width:15.8px;height:13.7px;border-color:#3d1a22;border-width:1.300px;background:linear-gradient(#e2b8bb,#c98890 50%,#d8a3a8);"></div><svg class="b" style="left:731.1px;top:7.5px;" width="15.8" height="13.7" viewBox="1679.1 338.5 15.8 13.7"><path d="M1682.2 341.8l9.600 7M1691.8 341.8l-9.600 7" stroke="#fff" stroke-width="2.700" fill="none"/></svg><div class="vc" style="left:3.5px;top:25px;width:746.2px;height:131.75px;"><div class="b" style="left:14.5px;top:2.3px;width:167.2px;height:160px;border:1px solid #000;"></div><span class="t" style="left:28.90px;top:17.60px;font-size:14.4px;font-family:'DejaVu Sans',sans-serif;font-weight:200;letter-spacing:0.230px;-webkit-text-stroke:.3px #000;">U, Magnitude</span><div class="b" style="left:29.5px;top:47.3px;width:24px;height:16px;background:#ff0000;border:1px solid #1a1208;"></div><div class="b" style="left:52.5px;top:47.3px;width:7.3px;height:1px;background:#000;"></div><span class="t" style="left:68.80px;top:36.50px;font-size:14.6px;font-family:'DejaVu Sans',sans-serif;font-weight:200;letter-spacing:0.378px;-webkit-text-stroke:.3px #000;">+1.092e+02</span><div class="b" style="left:29.5px;top:62.3px;width:24px;height:16px;background:#ff5d00;border:1px solid #1a1208;"></div><div class="b" style="left:52.5px;top:62.3px;width:7.3px;height:1px;background:#000;"></div><span class="t" style="left:68.80px;top:51.50px;font-size:14.6px;font-family:'DejaVu Sans',sans-serif;font-weight:200;letter-spacing:0.378px;-webkit-text-stroke:.3px #000;">+1.001e+02</span><div class="b" style="left:29.5px;top:77.3px;width:24px;height:16px;background:#ffb900;border:1px solid #1a1208;"></div><div class="b" style="left:52.5px;top:77.3px;width:7.3px;height:1px;background:#000;"></div><span class="t" style="left:68.80px;top:66.50px;font-size:14.6px;font-family:'DejaVu Sans',sans-serif;font-weight:200;letter-spacing:0.378px;-webkit-text-stroke:.3px #000;">+9.101e+01</span><div class="b" style="left:29.5px;top:92.3px;width:24px;height:16px;background:#fff700;border:1px solid #1a1208;"></div><div class="b" style="left:52.5px;top:92.3px;width:7.3px;height:1px;background:#000;"></div><span class="t" style="left:68.80px;top:81.50px;font-size:14.6px;font-family:'DejaVu Sans',sans-serif;font-weight:200;letter-spacing:0.378px;-webkit-text-stroke:.3px #000;">+8.190e+01</span><div class="b" style="left:29.5px;top:107.3px;width:24px;height:16px;background:#8bf000;border:1px solid #1a1208;"></div><div class="b" style="left:52.5px;top:107.3px;width:7.3px;height:1px;background:#000;"></div><span class="t" style="left:68.80px;top:96.50px;font-size:14.6px;font-family:'DejaVu Sans',sans-serif;font-weight:200;letter-spacing:0.378px;-webkit-text-stroke:.3px #000;">+7.280e+01</span><div class="b" style="left:29.5px;top:122.3px;width:24px;height:16px;background:#2ee000;border:1px solid #1a1208;"></div><div class="b" style="left:52.5px;top:122.3px;width:7.3px;height:1px;background:#000;"></div><span class="t" style="left:68.80px;top:111.50px;font-size:14.6px;font-family:'DejaVu Sans',sans-serif;font-weight:200;letter-spacing:0.378px;-webkit-text-stroke:.3px #000;">+6.370e+01</span><span class="t" style="left:104.50px;top:116.80px;font-size:13.6px;font-family:'DejaVu Sans',sans-serif;font-weight:200;letter-spacing:1.045px;-webkit-text-stroke:.22px #000;">Step: Step-1</span><svg class="b" style="left:323.5px;top:7px" width="170" height="130" viewBox="520 200 170 130"><defs><filter id="mb4" x="-5%" y="-5%" width="110%" height="110%"><feGaussianBlur stdDeviation="1.300"/></filter><clipPath id="mc4"><polygon points="529.84,263.29 531.61,266.43 629.2,319.56 680.85,293 680.85,288.86 675.24,285.13 674.65,270.17 665.79,263.29 658.91,261.32 657.92,252.46 646.91,246.56 631.17,240.66 619.36,235.74 611.49,229.84 604.6,226.89 595.75,229.35 586.9,231.81 579.03,230.82 573.12,228.85 571.35,237.71 558.86,243.12 558.37,239.68 548.53,234.26 540.17,241.15 539.18,259.35"/></clipPath><filter id="mb42"><feGaussianBlur stdDeviation="0.350"/></filter></defs><polygon points="529.84,263.29 531.61,266.43 629.2,319.56 680.85,293 680.85,288.86 675.24,285.13 674.65,270.17 665.79,263.29 658.91,261.32 657.92,252.46 646.91,246.56 631.17,240.66 619.36,235.74 611.49,229.84 604.6,226.89 595.75,229.35 586.9,231.81 579.03,230.82 573.12,228.85 571.35,237.71 558.86,243.12 558.37,239.68 548.53,234.26 540.17,241.15 539.18,259.35" fill="#0000e2"/><g clip-path="url(#mc4)"><g filter="url(#mb4)"><polygon points="573.12,237.71 588.86,233.28 604.6,229.35 618.38,237.22 646.91,248.53 656.74,254.43 657.73,262.3 647.89,266.24 628.21,257.88 608.54,250 592.8,252.96 582.96,249.02 575.09,245.09" fill="#0000b6"/><polygon points="556.4,248.53 573.62,242.82 575.58,261.81 559.35,266.43" fill="#0a0af6"/><polygon points="541.15,242.63 548.53,236.23 557.38,241.15 557.88,252.46 549.51,257.38 541.15,259.35" fill="#0000c2"/><polygon points="600.67,273.62 618.38,282.96 637.07,292.8 637.07,299.69 616.41,291.82 600.67,283.94" fill="#0000aa"/><polygon points="636.58,275.09 651.33,271.16 652.32,288.86 638.54,294.77" fill="#0000b2"/><polygon points="604.6,289.36 620.34,295.26 621.33,309.03 605.59,302.14" fill="#0606f2"/><polygon points="622.31,297.72 634.12,292.8 635.1,308.54 624.28,312.47" fill="#0000bc"/><polygon points="659.7,264.27 673.47,271.16 673.96,283.94 660.68,279.03" fill="#0707ee"/><polygon points="579.03,261.32 600.67,271.16 600.67,279.03 579.03,269.19" fill="#0000b4"/><polygon points="532.79,264.76 628.71,316.9 629.2,318.87 532.3,266.24" fill="#0000c8"/></g></g><g filter="url(#mb42)"><polygon points="591.66,269.38 601.85,266.2 612.03,262.38 613.3,266.83 604.39,273.2 592.93,276.38" fill="#f0640c" /><polygon points="591.66,269.38 596.75,267.85 597.39,275.11 592.93,276.76" fill="#e03c10" /><polygon points="612.03,263.02 627.31,258.56 631.13,266.83 628.58,278.29 614.58,280.84 612.03,273.2" fill="#2a8ae8" opacity=".9"/><polygon points="617.76,266.83 625.4,264.92 626.03,273.2 619.03,274.47" fill="#0a14b0" /><polygon points="618.4,274.47 627.31,273.2 626.03,280.84 617.12,281.47" fill="#28c870" /><polygon points="604.39,282.11 614.58,280.2 627.31,285.29 622.22,291.02 612.03,288.48" fill="#30d0d8" /><polygon points="628.58,266.83 636.22,269.38 632.4,273.2 628.58,271.93" fill="#3898f0" /></g></svg></div></section><section class="vp" style="left:191px;top:495px;width:756px;height:163px;border-style:solid;border-color:#454c54;border-width:1px 1px 0px 2px;background:#f2f5f9;border-radius:4.500px 4.500px 0 0;"><div class="b" style="left:0px;top:0px;width:753px;height:1px;background:#fbfdff;"></div><div class="vt" style="left:0px;top:1px;width:753px;height:23.7px;"></div><svg class="b" style="left:7px;top:8.4px;" width="14" height="13" viewBox="200 504.4 14 13"><rect x="200.5" y="504.9" width="13" height="12" fill="#fff" stroke="#3d62a8" stroke-width="1"/><rect x="201" y="505.4" width="12" height="2.200" fill="#4a78c0"/><circle cx="207" cy="512" r="3.900" fill="#1c2466"/><rect x="203" y="511.3" width="8" height="1.500" fill="#fff"/></svg><span class="t" style="left:26.40px;top:3.80px;font-size:12.5px;font-family:'Liberation Sans','Noto Sans CJK SC',sans-serif;color:#10182c;letter-spacing:0.200px;">Viewport: 5</span><span class="t" style="left:112.25px;top:3.80px;font-size:12.5px;font-family:'Liberation Sans','Noto Sans CJK SC',sans-serif;color:#10182c;letter-spacing:0.318px;">ODB: D:/Users/Administrator/De...sktop/Job-1-Frequency.odb</span><div class="wb" style="left:693.2px;top:7.2px;width:15.5px;height:13.5px;"><div class="b" style="left:1px;top:5.300px;width:10.600px;height:4.300px;border:1.200px solid #4a5868;border-radius:1.500px;background:#fff"></div></div><div class="wb" style="left:712.3px;top:7.2px;width:15.5px;height:13.5px;"><div class="b" style="left:1px;top:1.200px;width:10.800px;height:8.400px;border:1.200px solid #4a5868;border-radius:1px;background:#f8fafd"></div><div class="b" style="left:4px;top:4px;width:4.600px;height:2.800px;border:1.100px solid #4a5868"></div></div><div class="wb" style="left:731.1px;top:7.2px;width:15.8px;height:13.7px;border-color:#3d1a22;border-width:1.300px;background:linear-gradient(#e2b8bb,#c98890 50%,#d8a3a8);"></div><svg class="b" style="left:731.1px;top:7.2px;" width="15.8" height="13.7" viewBox="924.1 503.2 15.8 13.7"><path d="M927.2 506.5l9.600 7M936.8 506.5l-9.600 7" stroke="#fff" stroke-width="2.700" fill="none"/></svg><div class="vc" style="left:3.5px;top:24.7px;width:746.2px;height:131.8px;"><div class="b" style="left:14.5px;top:2.6px;width:167.2px;height:160px;border:1px solid #000;"></div><span class="t" style="left:28.90px;top:17.90px;font-size:14.4px;font-family:'DejaVu Sans',sans-serif;font-weight:200;letter-spacing:0.230px;-webkit-text-stroke:.3px #000;">U, Magnitude</span><div class="b" style="left:29.5px;top:47.6px;width:24px;height:16px;background:#ff0000;border:1px solid #1a1208;"></div><div class="b" style="left:52.5px;top:47.6px;width:7.3px;height:1px;background:#000;"></div><span class="t" style="left:68.80px;top:36.80px;font-size:14.6px;font-family:'DejaVu Sans',sans-serif;font-weight:200;letter-spacing:0.378px;-webkit-text-stroke:.3px #000;">+1.867e+02</span><div class="b" style="left:29.5px;top:62.6px;width:24px;height:16px;background:#ff5d00;border:1px solid #1a1208;"></div><div class="b" style="left:52.5px;top:62.6px;width:7.3px;height:1px;background:#000;"></div><span class="t" style="left:68.80px;top:51.80px;font-size:14.6px;font-family:'DejaVu Sans',sans-serif;font-weight:200;letter-spacing:0.378px;-webkit-text-stroke:.3px #000;">+1.711e+02</span><div class="b" style="left:29.5px;top:77.6px;width:24px;height:16px;background:#ffb900;border:1px solid #1a1208;"></div><div class="b" style="left:52.5px;top:77.6px;width:7.3px;height:1px;background:#000;"></div><span class="t" style="left:68.80px;top:66.80px;font-size:14.6px;font-family:'DejaVu Sans',sans-serif;font-weight:200;letter-spacing:0.378px;-webkit-text-stroke:.3px #000;">+1.556e+02</span><div class="b" style="left:29.5px;top:92.6px;width:24px;height:16px;background:#fff700;border:1px solid #1a1208;"></div><div class="b" style="left:52.5px;top:92.6px;width:7.3px;height:1px;background:#000;"></div><span class="t" style="left:68.80px;top:81.80px;font-size:14.6px;font-family:'DejaVu Sans',sans-serif;font-weight:200;letter-spacing:0.378px;-webkit-text-stroke:.3px #000;">+1.400e+02</span><div class="b" style="left:29.5px;top:107.6px;width:24px;height:16px;background:#8bf000;border:1px solid #1a1208;"></div><div class="b" style="left:52.5px;top:107.6px;width:7.3px;height:1px;background:#000;"></div><span class="t" style="left:68.80px;top:96.80px;font-size:14.6px;font-family:'DejaVu Sans',sans-serif;font-weight:200;letter-spacing:0.378px;-webkit-text-stroke:.3px #000;">+1.245e+02</span><div class="b" style="left:29.5px;top:122.6px;width:24px;height:16px;background:#2ee000;border:1px solid #1a1208;"></div><div class="b" style="left:52.5px;top:122.6px;width:7.3px;height:1px;background:#000;"></div><span class="t" style="left:68.80px;top:111.80px;font-size:14.6px;font-family:'DejaVu Sans',sans-serif;font-weight:200;letter-spacing:0.378px;-webkit-text-stroke:.3px #000;">+1.089e+02</span><span class="t" style="left:104.50px;top:117.10px;font-size:13.6px;font-family:'DejaVu Sans',sans-serif;font-weight:200;letter-spacing:1.045px;-webkit-text-stroke:.22px #000;">Step: Step-1</span><svg class="b" style="left:323.5px;top:7.3px" width="170" height="130" viewBox="520 200 170 130"><defs><filter id="mb5" x="-5%" y="-5%" width="110%" height="110%"><feGaussianBlur stdDeviation="1.300"/></filter><clipPath id="mc5"><polygon points="530.55,261.83 530.55,265.65 628.58,321.92 679.76,296.46 679.76,291.12 675.18,288.57 674.67,273.29 670.85,269.47 669.57,255.47 659.13,249.74 646.4,245.92 639.02,242.99 637.75,236.37 624.76,232.55 614.58,229.37 605.92,227.46 604.65,221.1 589.12,214.73 576.38,211.17 563.65,217.28 550.92,223.39 550.29,232.55 540.74,240.19 542.01,258.02"/></clipPath><filter id="mb52"><feGaussianBlur stdDeviation="0.350"/></filter></defs><polygon points="530.55,261.83 530.55,265.65 628.58,321.92 679.76,296.46 679.76,291.12 675.18,288.57 674.67,273.29 670.85,269.47 669.57,255.47 659.13,249.74 646.4,245.92 639.02,242.99 637.75,236.37 624.76,232.55 614.58,229.37 605.92,227.46 604.65,221.1 589.12,214.73 576.38,211.17 563.65,217.28 550.92,223.39 550.29,232.55 540.74,240.19 542.01,258.02" fill="#0000e0"/><g clip-path="url(#mc5)"><g filter="url(#mb5)"><polygon points="553.47,227.46 576.38,216 601.85,224.28 603.12,235.1 634.95,244.01 665.5,258.02 666.77,268.2 614.58,261.83 576.38,244.01 553.47,236.37" fill="#0606f4"/><polygon points="542.01,244.01 614.58,283.48 614.58,291.12 542.01,252.92" fill="#0000c4"/><polygon points="619.67,278.38 640.04,273.29 641.31,293.66 622.22,302.57" fill="#0000a8"/><polygon points="650.22,273.29 669.32,268.2 670.59,283.48 652.77,291.12" fill="#0000ba"/><polygon points="610.76,291.12 622.22,296.21 622.85,311.48 611.39,306.39" fill="#0808f0"/><polygon points="531.83,263.11 628.33,318.49 628.58,321.03 531.19,265.02" fill="#0000c6"/><polygon points="554.11,244.65 571.93,252.92 571.93,262.47 554.11,254.2" fill="#000096"/><polygon points="591.02,266.29 610.12,275.84 610.12,286.66 591.02,277.11" fill="#000096"/></g></g><g filter="url(#mb52)"></g></svg></div></section><section class="vp" style="left:947px;top:495px;width:755px;height:163px;border-style:solid;border-color:#454c54;border-width:1px 1px 0px 1px;background:#f2f5f9;border-radius:4.500px 4.500px 0 0;"><div class="b" style="left:0px;top:0px;width:753px;height:1px;background:#fbfdff;"></div><div class="vt" style="left:0px;top:1px;width:753px;height:23.7px;"></div><svg class="b" style="left:7px;top:8.4px;" width="14" height="13" viewBox="955 504.4 14 13"><rect x="955.5" y="504.9" width="13" height="12" fill="#fff" stroke="#3d62a8" stroke-width="1"/><rect x="956" y="505.4" width="12" height="2.200" fill="#4a78c0"/><circle cx="962" cy="512" r="3.900" fill="#1c2466"/><rect x="958" y="511.3" width="8" height="1.500" fill="#fff"/></svg><span class="t" style="left:26.40px;top:3.80px;font-size:12.5px;font-family:'Liberation Sans','Noto Sans CJK SC',sans-serif;color:#10182c;letter-spacing:0.200px;">Viewport: 6</span><span class="t" style="left:112.25px;top:3.80px;font-size:12.5px;font-family:'Liberation Sans','Noto Sans CJK SC',sans-serif;color:#10182c;letter-spacing:0.318px;">ODB: D:/Users/Administrator/De...sktop/Job-1-Frequency.odb</span><div class="wb" style="left:693.2px;top:7.2px;width:15.5px;height:13.5px;"><div class="b" style="left:1px;top:5.300px;width:10.600px;height:4.300px;border:1.200px solid #4a5868;border-radius:1.500px;background:#fff"></div></div><div class="wb" style="left:712.3px;top:7.2px;width:15.5px;height:13.5px;"><div class="b" style="left:1px;top:1.200px;width:10.800px;height:8.400px;border:1.200px solid #4a5868;border-radius:1px;background:#f8fafd"></div><div class="b" style="left:4px;top:4px;width:4.600px;height:2.800px;border:1.100px solid #4a5868"></div></div><div class="wb" style="left:731.1px;top:7.2px;width:15.8px;height:13.7px;border-color:#3d1a22;border-width:1.300px;background:linear-gradient(#e2b8bb,#c98890 50%,#d8a3a8);"></div><svg class="b" style="left:731.1px;top:7.2px;" width="15.8" height="13.7" viewBox="1679.1 503.2 15.8 13.7"><path d="M1682.2 506.5l9.600 7M1691.8 506.5l-9.600 7" stroke="#fff" stroke-width="2.700" fill="none"/></svg><div class="vc" style="left:3.5px;top:24.7px;width:746.2px;height:131.8px;"><div class="b" style="left:14.5px;top:2.6px;width:167.2px;height:160px;border:1px solid #000;"></div><span class="t" style="left:28.90px;top:17.90px;font-size:14.4px;font-family:'DejaVu Sans',sans-serif;font-weight:200;letter-spacing:0.230px;-webkit-text-stroke:.3px #000;">U, Magnitude</span><div class="b" style="left:29.5px;top:47.6px;width:24px;height:16px;background:#ff0000;border:1px solid #1a1208;"></div><div class="b" style="left:52.5px;top:47.6px;width:7.3px;height:1px;background:#000;"></div><span class="t" style="left:68.80px;top:36.80px;font-size:14.6px;font-family:'DejaVu Sans',sans-serif;font-weight:200;letter-spacing:0.378px;-webkit-text-stroke:.3px #000;">+1.867e+02</span><div class="b" style="left:29.5px;top:62.6px;width:24px;height:16px;background:#ff5d00;border:1px solid #1a1208;"></div><div class="b" style="left:52.5px;top:62.6px;width:7.3px;height:1px;background:#000;"></div><span class="t" style="left:68.80px;top:51.80px;font-size:14.6px;font-family:'DejaVu Sans',sans-serif;font-weight:200;letter-spacing:0.378px;-webkit-text-stroke:.3px #000;">+1.711e+02</span><div class="b" style="left:29.5px;top:77.6px;width:24px;height:16px;background:#ffb900;border:1px solid #1a1208;"></div><div class="b" style="left:52.5px;top:77.6px;width:7.3px;height:1px;background:#000;"></div><span class="t" style="left:68.80px;top:66.80px;font-size:14.6px;font-family:'DejaVu Sans',sans-serif;font-weight:200;letter-spacing:0.378px;-webkit-text-stroke:.3px #000;">+1.556e+02</span><div class="b" style="left:29.5px;top:92.6px;width:24px;height:16px;background:#fff700;border:1px solid #1a1208;"></div><div class="b" style="left:52.5px;top:92.6px;width:7.3px;height:1px;background:#000;"></div><span class="t" style="left:68.80px;top:81.80px;font-size:14.6px;font-family:'DejaVu Sans',sans-serif;font-weight:200;letter-spacing:0.378px;-webkit-text-stroke:.3px #000;">+1.400e+02</span><div class="b" style="left:29.5px;top:107.6px;width:24px;height:16px;background:#8bf000;border:1px solid #1a1208;"></div><div class="b" style="left:52.5px;top:107.6px;width:7.3px;height:1px;background:#000;"></div><span class="t" style="left:68.80px;top:96.80px;font-size:14.6px;font-family:'DejaVu Sans',sans-serif;font-weight:200;letter-spacing:0.378px;-webkit-text-stroke:.3px #000;">+1.245e+02</span><div class="b" style="left:29.5px;top:122.6px;width:24px;height:16px;background:#2ee000;border:1px solid #1a1208;"></div><div class="b" style="left:52.5px;top:122.6px;width:7.3px;height:1px;background:#000;"></div><span class="t" style="left:68.80px;top:111.80px;font-size:14.6px;font-family:'DejaVu Sans',sans-serif;font-weight:200;letter-spacing:0.378px;-webkit-text-stroke:.3px #000;">+1.089e+02</span><span class="t" style="left:104.50px;top:117.10px;font-size:13.6px;font-family:'DejaVu Sans',sans-serif;font-weight:200;letter-spacing:1.045px;-webkit-text-stroke:.22px #000;">Step: Step-1</span><svg class="b" style="left:323.5px;top:7.3px" width="170" height="130" viewBox="520 200 170 130"><defs><filter id="mb6" x="-5%" y="-5%" width="110%" height="110%"><feGaussianBlur stdDeviation="1.300"/></filter><clipPath id="mc6"><polygon points="530.55,261.83 530.55,265.65 628.58,321.92 679.76,296.46 679.76,291.12 675.18,288.57 674.67,273.29 670.85,269.47 669.57,255.47 659.13,249.74 646.4,245.92 639.02,242.99 637.75,236.37 624.76,232.55 614.58,229.37 605.92,227.46 604.65,221.1 589.12,214.73 576.38,211.17 563.65,217.28 550.92,223.39 550.29,232.55 540.74,240.19 542.01,258.02"/></clipPath><filter id="mb62"><feGaussianBlur stdDeviation="0.350"/></filter></defs><polygon points="530.55,261.83 530.55,265.65 628.58,321.92 679.76,296.46 679.76,291.12 675.18,288.57 674.67,273.29 670.85,269.47 669.57,255.47 659.13,249.74 646.4,245.92 639.02,242.99 637.75,236.37 624.76,232.55 614.58,229.37 605.92,227.46 604.65,221.1 589.12,214.73 576.38,211.17 563.65,217.28 550.92,223.39 550.29,232.55 540.74,240.19 542.01,258.02" fill="#0000e0"/><g clip-path="url(#mc6)"><g filter="url(#mb6)"><polygon points="553.47,227.46 576.38,216 601.85,224.28 603.12,235.1 634.95,244.01 665.5,258.02 666.77,268.2 614.58,261.83 576.38,244.01 553.47,236.37" fill="#0606f4"/><polygon points="542.01,244.01 614.58,283.48 614.58,291.12 542.01,252.92" fill="#0000c4"/><polygon points="619.67,278.38 640.04,273.29 641.31,293.66 622.22,302.57" fill="#0000a8"/><polygon points="650.22,273.29 669.32,268.2 670.59,283.48 652.77,291.12" fill="#0000ba"/><polygon points="610.76,291.12 622.22,296.21 622.85,311.48 611.39,306.39" fill="#0808f0"/><polygon points="531.83,263.11 628.33,318.49 628.58,321.03 531.19,265.02" fill="#0000c6"/><polygon points="554.11,244.65 571.93,252.92 571.93,262.47 554.11,254.2" fill="#000096"/><polygon points="591.02,266.29 610.12,275.84 610.12,286.66 591.02,277.11" fill="#000096"/></g></g><g filter="url(#mb62)"></g></svg></div></section><section class="vp" style="left:191px;top:658px;width:756px;height:165px;border-style:solid;border-color:#454c54;border-width:2px 1px 1px 2px;background:#f2f5f9;border-radius:4.500px 4.500px 0 0;"><div class="b" style="left:0px;top:0px;width:753px;height:1px;background:#fbfdff;"></div><div class="vt" style="left:0px;top:1px;width:753px;height:23.7px;"></div><svg class="b" style="left:7px;top:8.5px;" width="14" height="13" viewBox="200 668.5 14 13"><rect x="200.5" y="669" width="13" height="12" fill="#fff" stroke="#3d62a8" stroke-width="1"/><rect x="201" y="669.5" width="12" height="2.200" fill="#4a78c0"/><circle cx="207" cy="676.1" r="3.900" fill="#1c2466"/><rect x="203" y="675.4" width="8" height="1.500" fill="#fff"/></svg><span class="t" style="left:26.40px;top:3.60px;font-size:12.5px;font-family:'Liberation Sans','Noto Sans CJK SC',sans-serif;color:#10182c;letter-spacing:0.200px;">Viewport: 7</span><span class="t" style="left:112.25px;top:3.60px;font-size:12.5px;font-family:'Liberation Sans','Noto Sans CJK SC',sans-serif;color:#10182c;letter-spacing:0.318px;">ODB: D:/Users/Administrator/De...sktop/Job-1-Frequency.odb</span><div class="wb" style="left:693.2px;top:7.2px;width:15.5px;height:13.5px;"><div class="b" style="left:1px;top:5.300px;width:10.600px;height:4.300px;border:1.200px solid #4a5868;border-radius:1.500px;background:#fff"></div></div><div class="wb" style="left:712.3px;top:7.2px;width:15.5px;height:13.5px;"><div class="b" style="left:1px;top:1.200px;width:10.800px;height:8.400px;border:1.200px solid #4a5868;border-radius:1px;background:#f8fafd"></div><div class="b" style="left:4px;top:4px;width:4.600px;height:2.800px;border:1.100px solid #4a5868"></div></div><div class="wb" style="left:731.1px;top:7.2px;width:15.8px;height:13.7px;border-color:#3d1a22;border-width:1.300px;background:linear-gradient(#e2b8bb,#c98890 50%,#d8a3a8);"></div><svg class="b" style="left:731.1px;top:7.2px;" width="15.8" height="13.7" viewBox="924.1 667.2 15.8 13.7"><path d="M927.2 670.5l9.600 7M936.8 670.5l-9.600 7" stroke="#fff" stroke-width="2.700" fill="none"/></svg><div class="vc" style="left:3.5px;top:24.7px;width:746.2px;height:132px;"><div class="b" style="left:14.5px;top:2.6px;width:167.2px;height:160px;border:1px solid #000;"></div><span class="t" style="left:28.90px;top:17.90px;font-size:14.4px;font-family:'DejaVu Sans',sans-serif;font-weight:200;letter-spacing:0.230px;-webkit-text-stroke:.3px #000;">U, Magnitude</span><div class="b" style="left:29.5px;top:47.6px;width:24px;height:16px;background:#ff0000;border:1px solid #1a1208;"></div><div class="b" style="left:52.5px;top:47.6px;width:7.3px;height:1px;background:#000;"></div><span class="t" style="left:68.80px;top:36.80px;font-size:14.6px;font-family:'DejaVu Sans',sans-serif;font-weight:200;letter-spacing:0.378px;-webkit-text-stroke:.3px #000;">+1.867e+02</span><div class="b" style="left:29.5px;top:62.6px;width:24px;height:16px;background:#ff5d00;border:1px solid #1a1208;"></div><div class="b" style="left:52.5px;top:62.6px;width:7.3px;height:1px;background:#000;"></div><span class="t" style="left:68.80px;top:51.80px;font-size:14.6px;font-family:'DejaVu Sans',sans-serif;font-weight:200;letter-spacing:0.378px;-webkit-text-stroke:.3px #000;">+1.711e+02</span><div class="b" style="left:29.5px;top:77.6px;width:24px;height:16px;background:#ffb900;border:1px solid #1a1208;"></div><div class="b" style="left:52.5px;top:77.6px;width:7.3px;height:1px;background:#000;"></div><span class="t" style="left:68.80px;top:66.80px;font-size:14.6px;font-family:'DejaVu Sans',sans-serif;font-weight:200;letter-spacing:0.378px;-webkit-text-stroke:.3px #000;">+1.556e+02</span><div class="b" style="left:29.5px;top:92.6px;width:24px;height:16px;background:#fff700;border:1px solid #1a1208;"></div><div class="b" style="left:52.5px;top:92.6px;width:7.3px;height:1px;background:#000;"></div><span class="t" style="left:68.80px;top:81.80px;font-size:14.6px;font-family:'DejaVu Sans',sans-serif;font-weight:200;letter-spacing:0.378px;-webkit-text-stroke:.3px #000;">+1.400e+02</span><div class="b" style="left:29.5px;top:107.6px;width:24px;height:16px;background:#8bf000;border:1px solid #1a1208;"></div><div class="b" style="left:52.5px;top:107.6px;width:7.3px;height:1px;background:#000;"></div><span class="t" style="left:68.80px;top:96.80px;font-size:14.6px;font-family:'DejaVu Sans',sans-serif;font-weight:200;letter-spacing:0.378px;-webkit-text-stroke:.3px #000;">+1.245e+02</span><div class="b" style="left:29.5px;top:122.6px;width:24px;height:16px;background:#2ee000;border:1px solid #1a1208;"></div><div class="b" style="left:52.5px;top:122.6px;width:7.3px;height:1px;background:#000;"></div><span class="t" style="left:68.80px;top:111.80px;font-size:14.6px;font-family:'DejaVu Sans',sans-serif;font-weight:200;letter-spacing:0.378px;-webkit-text-stroke:.3px #000;">+1.089e+02</span><span class="t" style="left:104.50px;top:117.10px;font-size:13.6px;font-family:'DejaVu Sans',sans-serif;font-weight:200;letter-spacing:1.045px;-webkit-text-stroke:.22px #000;">Step: Step-1</span><svg class="b" style="left:323.5px;top:7.3px" width="170" height="130" viewBox="520 200 170 130"><defs><filter id="mb7" x="-5%" y="-5%" width="110%" height="110%"><feGaussianBlur stdDeviation="1.300"/></filter><clipPath id="mc7"><polygon points="530.55,261.83 530.55,265.65 628.58,321.92 679.76,296.46 679.76,291.12 675.18,288.57 674.67,273.29 670.85,269.47 669.57,255.47 659.13,249.74 646.4,245.92 639.02,242.99 637.75,236.37 624.76,232.55 614.58,229.37 605.92,227.46 604.65,221.1 589.12,214.73 576.38,211.17 563.65,217.28 550.92,223.39 550.29,232.55 540.74,240.19 542.01,258.02"/></clipPath><filter id="mb72"><feGaussianBlur stdDeviation="0.350"/></filter></defs><polygon points="530.55,261.83 530.55,265.65 628.58,321.92 679.76,296.46 679.76,291.12 675.18,288.57 674.67,273.29 670.85,269.47 669.57,255.47 659.13,249.74 646.4,245.92 639.02,242.99 637.75,236.37 624.76,232.55 614.58,229.37 605.92,227.46 604.65,221.1 589.12,214.73 576.38,211.17 563.65,217.28 550.92,223.39 550.29,232.55 540.74,240.19 542.01,258.02" fill="#0000e0"/><g clip-path="url(#mc7)"><g filter="url(#mb7)"><polygon points="553.47,227.46 576.38,216 601.85,224.28 603.12,235.1 634.95,244.01 665.5,258.02 666.77,268.2 614.58,261.83 576.38,244.01 553.47,236.37" fill="#0606f4"/><polygon points="542.01,244.01 614.58,283.48 614.58,291.12 542.01,252.92" fill="#0000c4"/><polygon points="619.67,278.38 640.04,273.29 641.31,293.66 622.22,302.57" fill="#0000a8"/><polygon points="650.22,273.29 669.32,268.2 670.59,283.48 652.77,291.12" fill="#0000ba"/><polygon points="610.76,291.12 622.22,296.21 622.85,311.48 611.39,306.39" fill="#0808f0"/><polygon points="531.83,263.11 628.33,318.49 628.58,321.03 531.19,265.02" fill="#0000c6"/><polygon points="554.11,244.65 571.93,252.92 571.93,262.47 554.11,254.2" fill="#000096"/><polygon points="591.02,266.29 610.12,275.84 610.12,286.66 591.02,277.11" fill="#000096"/></g></g><g filter="url(#mb72)"></g></svg></div></section><section class="vp" style="left:947px;top:658px;width:755px;height:165px;border-style:solid;border-color:#1c232c;border-width:2px 1px 1px 1px;border-right-color:#0a1020;border-bottom-color:#0a1020;background:#d3e3f5;border-radius:4.500px 4.500px 0 0;"><div class="b" style="left:0px;top:0px;width:753px;height:1px;background:#fbfdff;"></div><div class="vt" style="left:0px;top:1px;width:753px;height:23.7px;background:linear-gradient(#abbed8,#a5c3e6 36%,#adcef2 41%,#b6d4f6 65%,#c2dffb 86%,#cfe6f8);"></div><svg class="b" style="left:7px;top:8.5px;" width="14" height="13" viewBox="955 668.5 14 13"><rect x="955.5" y="669" width="13" height="12" fill="#fff" stroke="#3d62a8" stroke-width="1"/><rect x="956" y="669.5" width="12" height="2.200" fill="#4a78c0"/><circle cx="962" cy="676.1" r="3.900" fill="#1c2466"/><rect x="958" y="675.4" width="8" height="1.500" fill="#fff"/></svg><span class="t" style="left:26.40px;top:3.60px;font-size:12.5px;font-family:'Liberation Sans','Noto Sans CJK SC',sans-serif;color:#10182c;letter-spacing:0.200px;">Viewport: 8</span><span class="t" style="left:112.25px;top:3.60px;font-size:12.5px;font-family:'Liberation Sans','Noto Sans CJK SC',sans-serif;color:#10182c;letter-spacing:0.318px;">ODB: D:/Users/Administrator/De...sktop/Job-1-Frequency.odb</span><div class="wb" style="left:693.2px;top:7.2px;width:15.5px;height:13.5px;"><div class="b" style="left:1px;top:5.300px;width:10.600px;height:4.300px;border:1.200px solid #4a5868;border-radius:1.500px;background:#fff"></div></div><div class="wb" style="left:712.3px;top:7.2px;width:15.5px;height:13.5px;"><div class="b" style="left:1px;top:1.200px;width:10.800px;height:8.400px;border:1.200px solid #4a5868;border-radius:1px;background:#f8fafd"></div><div class="b" style="left:4px;top:4px;width:4.600px;height:2.800px;border:1.100px solid #4a5868"></div></div><div class="wb" style="left:731.1px;top:7.2px;width:15.8px;height:13.7px;border-color:#3d1a22;border-width:1.300px;background:linear-gradient(#e2b8bb,#c98890 50%,#d8a3a8);"></div><svg class="b" style="left:731.1px;top:7.2px;" width="15.8" height="13.7" viewBox="1679.1 667.2 15.8 13.7"><path d="M1682.2 670.5l9.600 7M1691.8 670.5l-9.600 7" stroke="#fff" stroke-width="2.700" fill="none"/></svg><div class="b" style="left:0px;top:156.7px;width:753px;height:5.3px;background:linear-gradient(#d3e3f5,#c3dcf6 45%,#a6e6f8 70%,#8fd0e6);"></div><div class="vc" style="left:3.5px;top:24.7px;width:745.3px;height:132px;"><div class="b" style="left:14.5px;top:2.6px;width:167.2px;height:160px;border:1px solid #000;"></div><span class="t" style="left:28.90px;top:17.90px;font-size:14.4px;font-family:'DejaVu Sans',sans-serif;font-weight:200;letter-spacing:0.230px;-webkit-text-stroke:.3px #000;">U, Magnitude</span><div class="b" style="left:29.5px;top:47.6px;width:24px;height:16px;background:#ff0000;border:1px solid #1a1208;"></div><div class="b" style="left:52.5px;top:47.6px;width:7.3px;height:1px;background:#000;"></div><span class="t" style="left:68.80px;top:36.80px;font-size:14.6px;font-family:'DejaVu Sans',sans-serif;font-weight:200;letter-spacing:0.378px;-webkit-text-stroke:.3px #000;">+1.867e+02</span><div class="b" style="left:29.5px;top:62.6px;width:24px;height:16px;background:#ff5d00;border:1px solid #1a1208;"></div><div class="b" style="left:52.5px;top:62.6px;width:7.3px;height:1px;background:#000;"></div><span class="t" style="left:68.80px;top:51.80px;font-size:14.6px;font-family:'DejaVu Sans',sans-serif;font-weight:200;letter-spacing:0.378px;-webkit-text-stroke:.3px #000;">+1.711e+02</span><div class="b" style="left:29.5px;top:77.6px;width:24px;height:16px;background:#ffb900;border:1px solid #1a1208;"></div><div class="b" style="left:52.5px;top:77.6px;width:7.3px;height:1px;background:#000;"></div><span class="t" style="left:68.80px;top:66.80px;font-size:14.6px;font-family:'DejaVu Sans',sans-serif;font-weight:200;letter-spacing:0.378px;-webkit-text-stroke:.3px #000;">+1.556e+02</span><div class="b" style="left:29.5px;top:92.6px;width:24px;height:16px;background:#fff700;border:1px solid #1a1208;"></div><div class="b" style="left:52.5px;top:92.6px;width:7.3px;height:1px;background:#000;"></div><span class="t" style="left:68.80px;top:81.80px;font-size:14.6px;font-family:'DejaVu Sans',sans-serif;font-weight:200;letter-spacing:0.378px;-webkit-text-stroke:.3px #000;">+1.400e+02</span><div class="b" style="left:29.5px;top:107.6px;width:24px;height:16px;background:#8bf000;border:1px solid #1a1208;"></div><div class="b" style="left:52.5px;top:107.6px;width:7.3px;height:1px;background:#000;"></div><span class="t" style="left:68.80px;top:96.80px;font-size:14.6px;font-family:'DejaVu Sans',sans-serif;font-weight:200;letter-spacing:0.378px;-webkit-text-stroke:.3px #000;">+1.245e+02</span><div class="b" style="left:29.5px;top:122.6px;width:24px;height:16px;background:#2ee000;border:1px solid #1a1208;"></div><div class="b" style="left:52.5px;top:122.6px;width:7.3px;height:1px;background:#000;"></div><span class="t" style="left:68.80px;top:111.80px;font-size:14.6px;font-family:'DejaVu Sans',sans-serif;font-weight:200;letter-spacing:0.378px;-webkit-text-stroke:.3px #000;">+1.089e+02</span><span class="t" style="left:104.50px;top:117.10px;font-size:13.6px;font-family:'DejaVu Sans',sans-serif;font-weight:200;letter-spacing:1.045px;-webkit-text-stroke:.22px #000;">Step: Step-1</span><svg class="b" style="left:323.5px;top:7.3px" width="170" height="130" viewBox="520 200 170 130"><defs><filter id="mb8" x="-5%" y="-5%" width="110%" height="110%"><feGaussianBlur stdDeviation="1.300"/></filter><clipPath id="mc8"><polygon points="530.55,261.83 530.55,265.65 628.58,321.92 679.76,296.46 679.76,291.12 675.18,288.57 674.67,273.29 670.85,269.47 669.57,255.47 659.13,249.74 646.4,245.92 639.02,242.99 637.75,236.37 624.76,232.55 614.58,229.37 605.92,227.46 604.65,221.1 589.12,214.73 576.38,211.17 563.65,217.28 550.92,223.39 550.29,232.55 540.74,240.19 542.01,258.02"/></clipPath><filter id="mb82"><feGaussianBlur stdDeviation="0.350"/></filter></defs><polygon points="530.55,261.83 530.55,265.65 628.58,321.92 679.76,296.46 679.76,291.12 675.18,288.57 674.67,273.29 670.85,269.47 669.57,255.47 659.13,249.74 646.4,245.92 639.02,242.99 637.75,236.37 624.76,232.55 614.58,229.37 605.92,227.46 604.65,221.1 589.12,214.73 576.38,211.17 563.65,217.28 550.92,223.39 550.29,232.55 540.74,240.19 542.01,258.02" fill="#0000e0"/><g clip-path="url(#mc8)"><g filter="url(#mb8)"><polygon points="553.47,227.46 576.38,216 601.85,224.28 603.12,235.1 634.95,244.01 665.5,258.02 666.77,268.2 614.58,261.83 576.38,244.01 553.47,236.37" fill="#0606f4"/><polygon points="542.01,244.01 614.58,283.48 614.58,291.12 542.01,252.92" fill="#0000c4"/><polygon points="619.67,278.38 640.04,273.29 641.31,293.66 622.22,302.57" fill="#0000a8"/><polygon points="650.22,273.29 669.32,268.2 670.59,283.48 652.77,291.12" fill="#0000ba"/><polygon points="610.76,291.12 622.22,296.21 622.85,311.48 611.39,306.39" fill="#0808f0"/><polygon points="531.83,263.11 628.33,318.49 628.58,321.03 531.19,265.02" fill="#0000c6"/><polygon points="554.11,244.65 571.93,252.92 571.93,262.47 554.11,254.2" fill="#000096"/><polygon points="591.02,266.29 610.12,275.84 610.12,286.66 591.02,277.11" fill="#000096"/></g></g><g filter="url(#mb82)"></g></svg></div></section><div class="b" style="left:191px;top:494px;width:1511px;height:1px;background:#aab2bc;"></div><div class="b" style="left:1702px;top:166px;width:2px;height:492px;background:#b6bac0;"></div><div class="b" style="left:1702px;top:658px;width:2px;height:165px;background:#c5d3e6;"></div></div>
<div class="g" id="messagearea"><div class="b" style="left:-4px;top:862px;width:1690px;height:174.5px;border:1px solid #b4b4b4;background:#fff;"></div><div class="b" style="left:197px;top:878.3px;width:248px;height:12.7px;background:#0078d7;"></div><span class="t" style="left:-3.00px;top:862.20px;font-size:13.33px;font-family:'Liberation Mono',monospace;">:\Users\Administrator\Desktop\BDU_random.cae" has been opened.</span><span class="t" style="left:-3.00px;top:875.40px;font-size:13.33px;font-family:'Liberation Mono',monospace;">ts were printed to file "</span><span class="t" style="left:197.00px;top:875.40px;font-size:13.33px;font-family:'Liberation Mono',monospace;color:#cfeaff;">D:\Users\Administrator\Desktop\</span><span class="t" style="left:445.00px;top:875.40px;font-size:13.33px;font-family:'Liberation Mono',monospace;">BDU.png"</span><svg class="b" style="left:1689px;top:1023px;" width="14" height="14" viewBox="1689 1023 14 14"><rect x="1699.8" y="1024" width="2" height="2" fill="#a9a9a9"/><rect x="1694.8" y="1029" width="2" height="2" fill="#a9a9a9"/><rect x="1699.8" y="1029" width="2" height="2" fill="#a9a9a9"/><rect x="1689.8" y="1034" width="2" height="2" fill="#a9a9a9"/><rect x="1694.8" y="1034" width="2" height="2" fill="#a9a9a9"/><rect x="1699.8" y="1034" width="2" height="2" fill="#a9a9a9"/></svg><svg class="b" style="left:1594px;top:828px;" width="30" height="26" viewBox="1594 828 30 26"><path d="M1605.5 831.1 C1608.6 829.7 1613.3 832.0 1610.7 835.1 L1607.4 837.3" fill="none" stroke="#36928f" stroke-width="1.300"/><path d="M1597.4 851.5 L1602.5 842.3 C1605.7 840.3 1609.8 841.3 1608.8 843.6 C1607.6 846.2 1602.8 848.7 1598.9 849.6" fill="none" stroke="#36928f" stroke-width="1.400"/><path d="M1616.9 838.2 L1611.5 838.9 L1616.2 847.5 L1608.9 848.3" fill="none" stroke="#36928f" stroke-width="1.700" stroke-linejoin="miter"/></svg><span class="t" style="left:1624.60px;top:834.80px;font-size:12.3px;font-family:'Liberation Sans','Noto Sans CJK SC',sans-serif;color:#3a9a9c;letter-spacing:0.600px;font-style:italic;transform:scaleX(1.42);transform-origin:0 50%;-webkit-text-stroke:.45px #3a9a9c;">SIMULIA</span><span class="t" style="left:1415.50px;top:947.00px;font-size:20px;font-family:'Liberation Sans','Noto Sans CJK SC',sans-serif;color:#c4c4c4;font-weight:300;letter-spacing:0.646px;">激活 Windows</span><span class="t" style="left:1415.50px;top:971.00px;font-size:14.3px;font-family:'Liberation Sans','Noto Sans CJK SC',sans-serif;color:#cbcbcb;font-weight:300;letter-spacing:0.900px;">转到"设置"以激活 Windows。</span></div>
<div class="g" id="taskbar"><div class="b" style="left:176px;top:1040px;width:1528px;height:40px;background:linear-gradient(90deg,#1a1a17,#1b1c1a 19%,#23282c 21.500%,#252d31 54%,#202427 74%,#1c1e20);"></div><div class="b" style="left:0px;top:1037px;width:176px;height:43px;background:#fff;"></div><span class="t" style="left:-1.00px;top:1052.30px;font-size:13.4px;font-family:'Liberation Sans','Noto Sans CJK SC',sans-serif;color:#222;letter-spacing:0.609px;">的内容</span><div class="b" style="left:191.8px;top:1051.7px;width:16.2px;height:16.2px;border:2.200px solid #fff;border-radius:50%;"></div><div class="b" style="left:226.3px;top:1040px;width:247.5px;height:2.5px;background:#000;"></div><div class="b" style="left:226.3px;top:1042.5px;width:170px;height:34.7px;background:#fff;"></div><svg class="b" style="left:234px;top:1051px;" width="20" height="20" viewBox="234 1051 20 20"><circle cx="242" cy="1059.300" r="4.700" fill="none" stroke="#222" stroke-width="1.700"/><path d="M245.500 1063l4.200 4.300" stroke="#222" stroke-width="1.900" stroke-linecap="round"/></svg><span class="t" style="left:261.50px;top:1051.50px;font-size:13px;font-family:'Liberation Sans','Noto Sans CJK SC',sans-serif;color:#8d8d8d;letter-spacing:0.919px;">92号汽油或重回 “8...</span><div class="b" style="left:396.3px;top:1042.5px;width:77.5px;height:34.7px;background:#4170ef;"></div><span class="t" style="left:407.70px;top:1051.00px;font-size:14px;font-family:'Liberation Sans','Noto Sans CJK SC',sans-serif;color:#fff;letter-spacing:-0.400px;">百度一下</span><div class="b" style="left:536.4px;top:1078px;width:39.8px;height:2px;background:#7ab6e8;"></div><div class="b" style="left:585.2px;top:1078px;width:39.8px;height:2px;background:#7ab6e8;"></div><div class="b" style="left:634px;top:1078px;width:39.8px;height:2px;background:#7ab6e8;"></div><div class="b" style="left:682.8px;top:1078px;width:39.8px;height:2px;background:#7ab6e8;"></div><div class="b" style="left:731.6px;top:1078px;width:39.8px;height:2px;background:#7ab6e8;"></div><div class="b" style="left:780.4px;top:1078px;width:39.8px;height:2px;background:#7ab6e8;"></div><div class="b" style="left:829.2px;top:1078px;width:39.8px;height:2px;background:#7ab6e8;"></div><div class="b" style="left:874.7px;top:1040px;width:48.3px;height:40px;background:#4b4f55;"></div><div class="b" style="left:874.7px;top:1078px;width:48.3px;height:2px;background:#9fd0f5;"></div><div class="b" style="left:927.9px;top:1078px;width:39.8px;height:2px;background:#7ab6e8;"></div><svg class="b" style="left:490px;top:1042px;" width="475" height="36" viewBox="490 1042 475 36"><defs><linearGradient id="eg" x1="0" y1="0" x2="1" y2="1"><stop offset="0" stop-color="#35c1f1"/><stop offset=".55" stop-color="#1a7fd8"/><stop offset="1" stop-color="#0c56a8"/></linearGradient><linearGradient id="eg2" x1="0" y1="1" x2="1" y2="0"><stop offset="0" stop-color="#2a9fe0"/><stop offset="1" stop-color="#5fd068"/></linearGradient></defs><circle cx="506.800" cy="1060.300" r="12.200" fill="url(#eg)"/><path d="M496 1054c3-6 11-8 17-5 5 2.500 7 7 6 11.500-1 3-4 4.500-7.500 4-3-.5-4-2.500-3-5 1-2 .5-4.500-2-5.500-3.500-1.500-8-.5-10.500 0z" fill="url(#eg2)"/><path d="M503 1058c-2.500 3-2.500 8 .5 11 2.500 2.500 6 3.500 9.500 2.500-3 .5-6-.5-7.500-3-1.500-2.500-1-5 .500-7 1-1.500 0-3.500-3-3.500z" fill="#0a3f88" opacity=".85"/><rect x="544" y="1048.200" width="24" height="23.300" rx="3.500" fill="#e8151b"/><path d="M614.7 1058.31L614.7 1062.29L611.83 1062.6L611.42 1063.58L613.23 1065.83L610.43 1068.63L608.18 1066.82L607.2 1067.23L606.89 1070.1L602.91 1070.1L602.6 1067.23L601.62 1066.82L599.37 1068.63L596.57 1065.83L598.38 1063.58L597.97 1062.6L595.1 1062.29L595.1 1058.31L597.97 1058L598.38 1057.02L596.57 1054.77L599.37 1051.97L601.62 1053.78L602.6 1053.37L602.91 1050.5L606.89 1050.5L607.2 1053.37L608.18 1053.78L610.43 1051.97L613.23 1054.77L611.42 1057.02L611.83 1058z M604.9 1056.3a4 4 0 1 0 .01 0z" fill="#fff" fill-rule="evenodd"/><path d="M644.500 1052l18-2 3 1v14l-3 1.500-18-1.500z" fill="#d8dde2" stroke="#a8adb4" stroke-width=".8"/><path d="M646.500 1054l15.500-1.700v11.500l-15.500-1z" fill="#eef3f8"/><path d="M647.500 1062l3-4 2 2.500 3-6 3 5 2.500-2" fill="none" stroke="#3a7ad0" stroke-width="1"/><ellipse cx="656" cy="1068.500" rx="5.500" ry="2" fill="#c8ccd0"/><path d="M654 1065.500h4v3h-4z" fill="#b8bcc0"/><rect x="692" y="1048.500" width="22.700" height="22.300" rx="2.500" fill="#1b6bf2"/><path d="M696 1063.500l5.500-7 3.500 4.200 2.500-3 4.800 5.800h-5l-2.300-2.800-2.300 2.800z" fill="#fff"/><path d="M741.500 1053.500v-2.500h7l2 2.500z" fill="#e8b040"/><rect x="741.500" y="1053" width="21.300" height="15.800" rx="1" fill="#f8d466"/><path d="M746 1069v-5.500h12.500v5.500h-3v-3h-6.500v3z" fill="#3a8ae0"/><path d="M741.500 1060h21.300" stroke="#f0c450" stroke-width=".8"/><path d="M788.800 1051h6l3.200 11 3.300-11h5.700l-6 18.500h-5.400z" fill="#e83a1e"/><path d="M801.500 1051h6.200l-3.400 11.500 3.200-11.500h6l-6 18.500h-5.600l3.300-10z" fill="#f04a28"/><rect x="838.300" y="1050.500" width="22.200" height="17.500" fill="#000" stroke="#9a9a9a" stroke-width=".9"/><path d="M838.300 1052h22.200" stroke="#c8c8c8" stroke-width="1.300"/><text x="840.500" y="1060.500" font-family="Liberation Mono,monospace" font-size="5.500" font-weight="700" fill="#ddd">C:\_</text><defs><linearGradient id="sp" x1="0" y1="0" x2="1" y2="0"><stop offset="0" stop-color="#8a8ad0" stop-opacity=".2"/><stop offset=".5" stop-color="#a8a8e8"/><stop offset="1" stop-color="#8a8ad0" stop-opacity=".2"/></linearGradient></defs><path d="M899 1048.500c3 4 5.500 8 5.500 11.300s-2.500 7.300-5.500 11.300c-3-4-5.500-8-5.500-11.300s2.500-7.300 5.500-11.300z" fill="url(#sp)"/><rect x="888" y="1058.300" width="21.800" height="3" fill="#fff"/><circle cx="948.200" cy="1059.800" r="12" fill="#f6d81e"/><path d="M946 1066v-13.500c3-1.500 5-3 6.500-5.200.5 2.500-.5 5.500-3.700 7.200v9.500z" fill="#19a85a"/><circle cx="944.800" cy="1065.800" r="3.600" fill="#19a85a"/></svg><span class="t" style="left:546.20px;top:1050.30px;font-size:9.5px;font-family:'Liberation Sans','Noto Sans CJK SC',sans-serif;color:#fff;font-weight:700;letter-spacing:0.300px;">稻壳</span><svg class="b" style="left:1060px;top:1044px;" width="625" height="34" viewBox="1060 1044 625 34"><circle cx="1076.500" cy="1055.500" r="4.500" fill="#f5b83a"/><path d="M1066.500 1067.500a4.200 4.200 0 0 1-.5-8.300a6 6 0 0 1 11.500-1a4.700 4.700 0 0 1 1.500 9.300z" fill="#bfe4f8"/><path d="M1068 1064h9M1069.500 1061.500h6" stroke="#9ccdea" stroke-width=".8"/><circle cx="1237.500" cy="1055" r="5.200" fill="#f5a623"/><path d="M1227.500 1066.500a4 4 0 0 1-.3-8a6.500 6.500 0 0 1 12.300-.5a4.300 4.300 0 0 1 1.500 8.500z" fill="#e8eaee"/><path d="M1303 1063.300l6-6 6 6" fill="none" stroke="#fff" stroke-width="1.400"/><ellipse cx="1331" cy="1058" rx="6" ry="5" fill="#2dc35a"/><ellipse cx="1336.500" cy="1062" rx="5" ry="4.200" fill="#e8f0e8"/><circle cx="1329" cy="1056.800" r=".8" fill="#0a6a2a"/><circle cx="1333" cy="1056.800" r=".8" fill="#0a6a2a"/><rect x="1348" y="1052" width="17.300" height="16" rx="2" fill="#c8202a"/><circle cx="1354.500" cy="1058.500" r="2.800" fill="none" stroke="#fff" stroke-width="1.300"/><path d="M1359 1056.500c2-1 4 0 4 2M1352 1064.500h4M1358.500 1063.500h5" fill="none" stroke="#fff" stroke-width="1.200"/><circle cx="1381.200" cy="1060" r="8" fill="#f6d81e"/><path d="M1379.800 1064v-9c2-1 3.300-2 4.300-3.500.3 1.700-.3 3.700-2.500 4.800v6.300z" fill="#19a85a"/><circle cx="1379" cy="1064" r="2.400" fill="#19a85a"/><path d="M1400 1065a3.500 3.500 0 0 1-.3-7a5 5 0 0 1 9.300-.8a3.900 3.900 0 0 1 .8 7.800z" fill="#f2f2f2"/><path d="M1400 1065a3.500 3.500 0 0 1 0-4h9.500a3.900 3.900 0 0 1 .3 4z" fill="#b8b8b8"/><rect x="1425" y="1054.500" width="11.500" height="8.500" fill="none" stroke="#fff" stroke-width="1.300"/><path d="M1430.500 1063v3M1426.500 1066.500h9" stroke="#fff" stroke-width="1.300"/><rect x="1421" y="1054" width="4.500" height="5.500" fill="#1f2225" stroke="#fff" stroke-width="1.100"/><path d="M1423.200 1059.500v7" stroke="#fff" stroke-width="1.100"/><path d="M1445.500 1058h3l4-3.500v11.500l-4-3.500h-3z" fill="none" stroke="#fff" stroke-width="1.200" stroke-linejoin="round"/><path d="M1455 1057.300a4 4 0 0 1 0 6M1457.300 1055a7.500 7.500 0 0 1 0 10.500" fill="none" stroke="#fff" stroke-width="1.100"/><path d="M1459.800 1053a10 10 0 0 1 0 14.500" fill="none" stroke="#777" stroke-width="1"/><g transform="rotate(-8 1504 1060)"><rect x="1496" y="1052" width="16.500" height="16" rx="3" fill="#f0641e"/><path d="M1509 1056.500c-2-1.500-8.500-2-8.800 1.200-.3 3.300 8.300 1.800 8 5.300-.3 3-6.500 2.800-9.200 1" fill="none" stroke="#fff" stroke-width="2.300"/></g><path d="M1618.500 1052.500h15.500v13h-9l-3.500 3.300v-3.300h-3z" fill="#fff"/><path d="M1621.500 1056.500h8.500M1621.500 1059.300h8.500M1621.500 1062h5" stroke="#222" stroke-width="1.100"/><circle cx="1634.600" cy="1065.500" r="7.300" fill="#0c0c0c" stroke="#fff" stroke-width="1.200"/><text x="1631.300" y="1070" font-family="Liberation Sans,sans-serif" font-size="12" fill="#fff">5</text><path d="M1663.200 1052.500h15v11.500h-3.500l-3.500 3.500v-3.500h-8z" fill="none" stroke="#fff" stroke-width="1.200"/><path d="M1675 1067a3 3 0 0 0 3.500-3.500" fill="none" stroke="#fff" stroke-width="1"/></svg><span class="t" style="left:1093.80px;top:1050.20px;font-size:15.6px;font-family:'Liberation Sans','Noto Sans CJK SC',sans-serif;color:#fff;letter-spacing:-0.460px;">35°C</span><span class="t" style="left:1163.00px;top:1041.20px;font-size:12.2px;font-family:'Liberation Sans','Noto Sans CJK SC',sans-serif;color:#fff;letter-spacing:0.122px;">61℃</span><span class="t" style="left:1152.00px;top:1058.30px;font-size:12.2px;font-family:'Liberation Sans','Noto Sans CJK SC',sans-serif;color:#fff;letter-spacing:-0.480px;">CPU温度</span><span class="t" style="left:1254.50px;top:1050.20px;font-size:15.6px;font-family:'Liberation Sans','Noto Sans CJK SC',sans-serif;color:#fff;letter-spacing:-1.194px;">27°C</span><span class="t" style="left:1469.00px;top:1051.00px;font-size:14.5px;font-family:'Liberation Sans','Noto Sans CJK SC',sans-serif;color:#fff;font-weight:500;">中</span><span class="t" style="left:1550.00px;top:1041.20px;font-size:12.6px;font-family:'Liberation Sans','Noto Sans CJK SC',sans-serif;color:#fff;letter-spacing:-0.253px;">20:32</span><span class="t" style="left:1536.00px;top:1059.20px;font-size:12.6px;font-family:'Liberation Sans','Noto Sans CJK SC',sans-serif;color:#fff;letter-spacing:0.364px;">2022/7/11</span><div class="b" style="left:1699px;top:1040px;width:1px;height:40px;background:#5a5a5a;"></div></div>
<svg class="b" style="left:858px;top:10px;" width="18" height="24" viewBox="858 10 18 24"><path d="M861.400 12.400V28.500l4.200-3.400 2.700 5.800 2.500-1.200-2.500-5.400 4.600-.3z" fill="#fff" stroke="#000" stroke-width="1.100" stroke-linejoin="round"/></svg><div class="b" style="left:1704px;top:0px;width:24px;height:1080px;background:#000;"></div>
</body></html>
